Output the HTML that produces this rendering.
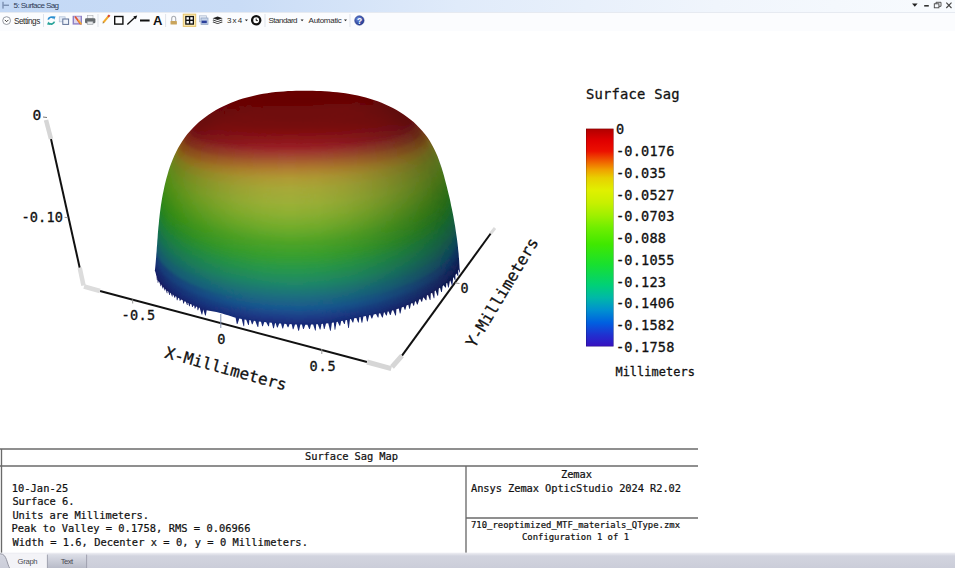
<!DOCTYPE html>
<html><head><meta charset="utf-8"><title>5: Surface Sag</title>
<style>
html,body{margin:0;padding:0;background:#fff;}
body{width:955px;height:568px;position:relative;overflow:hidden;font-family:"Liberation Sans",sans-serif;}
.abs{position:absolute;}
#title{left:0;top:0;width:955px;height:11.5px;background:linear-gradient(90deg,#c3d8f5 0%,#c9dcf6 25%,#e0ebfa 48%,#f0f5fc 75%,#f8fbfe 100%);}
#title span{position:absolute;left:12px;top:0;font-size:8px;line-height:11px;color:#333;}
#tb{left:0;top:11.5px;width:955px;height:19px;background:#fbfcfe;border-top:1px solid #e6eaf1;box-sizing:border-box;}
.t{position:absolute;font-size:7.6px;line-height:10px;color:#222;white-space:nowrap;}
.mono{font-family:"DejaVu Sans Mono","Liberation Mono",monospace;color:#111;white-space:pre;}
#tabs{left:0;top:553px;width:955px;height:15px;background:#cdd0dc;}
</style></head><body>
<div id="title" class="abs"></div>
<div id="tb" class="abs"></div>
<svg class="abs" style="left:0;top:0" width="955" height="568" viewBox="0 0 955 568">
<defs>
<clipPath id="dc"><path d="M154.8,271.0 L155.2,267.7 L155.5,264.4 L155.8,261.1 L156.1,257.8 L156.3,254.5 L156.6,251.2 L156.8,247.8 L157.1,244.5 L157.3,241.1 L157.6,237.7 L157.8,234.2 L158.1,230.7 L158.4,227.2 L158.8,223.7 L159.1,220.1 L159.5,216.5 L159.9,212.9 L160.4,209.2 L160.9,205.5 L161.5,201.8 L162.1,198.0 L162.8,194.2 L163.6,190.4 L164.4,186.6 L165.3,182.7 L166.3,178.8 L167.4,174.9 L168.5,171.0 L169.8,167.1 L171.2,163.2 L172.7,159.4 L174.4,155.5 L176.2,151.8 L178.1,148.1 L180.2,144.4 L182.4,140.9 L184.8,137.4 L187.4,134.1 L190.1,130.9 L192.9,127.9 L195.9,124.9 L199.0,122.1 L202.2,119.4 L205.5,116.9 L208.9,114.5 L212.4,112.2 L216.0,110.1 L219.7,108.0 L223.4,106.2 L227.2,104.4 L231.1,102.8 L235.0,101.2 L238.9,99.8 L242.9,98.6 L246.9,97.4 L251.0,96.4 L255.0,95.4 L259.1,94.6 L263.2,93.8 L267.3,93.2 L271.4,92.6 L275.5,92.1 L279.7,91.7 L283.8,91.4 L287.9,91.1 L292.0,91.0 L296.1,90.8 L300.2,90.8 L304.3,90.7 L308.5,90.8 L312.6,90.8 L316.7,90.9 L320.8,91.1 L324.9,91.3 L329.0,91.6 L333.1,91.9 L337.2,92.3 L341.3,92.8 L345.4,93.3 L349.5,94.0 L353.6,94.7 L357.7,95.5 L361.7,96.5 L365.8,97.5 L369.8,98.7 L373.8,99.9 L377.7,101.3 L381.6,102.8 L385.4,104.4 L389.2,106.2 L392.9,108.0 L396.6,110.0 L400.2,112.2 L403.7,114.5 L407.1,116.9 L410.4,119.4 L413.6,122.1 L416.6,125.0 L419.5,127.9 L422.3,131.0 L425.0,134.2 L427.5,137.6 L429.8,141.1 L431.9,144.7 L433.9,148.4 L435.7,152.2 L437.4,156.1 L438.9,160.0 L440.3,163.9 L441.6,167.8 L442.8,171.7 L443.9,175.6 L444.9,179.5 L445.9,183.3 L446.9,187.1 L447.8,190.8 L448.7,194.5 L449.6,198.1 L450.4,201.8 L451.1,205.4 L451.9,208.9 L452.6,212.4 L453.3,216.0 L453.9,219.4 L454.5,222.9 L455.1,226.3 L455.6,229.8 L456.1,233.2 L456.6,236.6 L457.1,239.9 L457.5,243.3 L457.9,246.7 L458.2,250.0 L458.6,253.4 L458.8,256.7 L459.1,260.0 L459.3,263.3 L459.5,266.7 L459.6,270.0 L459.5,268.0 L459.5,267.7 L460.2,272.6 L459.5,272.6 L458.7,269.5 L458.2,270.7 L458.4,275.9 L457.7,275.9 L456.5,273.6 L455.4,275.1 L455.5,280.3 L454.8,280.3 L453.7,277.3 L453.1,277.9 L452.5,285.3 L451.8,285.3 L450.3,280.4 L449.9,280.7 L448.8,287.5 L448.1,287.5 L447.1,282.8 L446.3,283.4 L446.0,287.6 L445.3,287.6 L443.6,285.3 L442.7,285.9 L441.9,292.0 L441.2,292.0 L440.0,287.8 L438.8,288.5 L438.1,295.8 L437.4,295.8 L435.6,290.6 L434.7,291.1 L434.4,298.3 L433.7,298.3 L432.1,292.7 L430.8,293.4 L430.5,300.0 L429.8,300.0 L428.0,295.0 L426.9,295.6 L426.5,300.3 L425.8,300.3 L423.6,297.4 L423.2,297.6 L422.1,301.8 L421.4,301.8 L420.2,299.1 L419.2,299.6 L417.7,304.6 L417.0,304.6 L415.8,301.3 L415.0,301.6 L414.0,305.7 L413.3,305.7 L412.4,302.9 L411.0,303.5 L409.9,308.7 L409.2,308.7 L408.3,304.7 L406.5,305.5 L405.4,309.7 L404.7,309.7 L403.6,306.7 L401.7,307.5 L400.5,313.6 L399.8,313.6 L398.8,308.5 L396.4,309.3 L396.0,315.5 L395.3,315.5 L393.2,310.2 L392.0,310.5 L390.7,314.9 L390.0,314.9 L388.6,311.4 L387.7,311.6 L386.8,315.4 L386.1,315.4 L384.4,312.3 L383.9,312.5 L382.8,317.4 L382.1,317.4 L380.2,313.2 L378.9,313.5 L378.5,317.5 L377.8,317.5 L376.0,314.1 L373.7,314.5 L372.2,318.6 L371.5,318.6 L370.2,315.1 L369.2,315.3 L367.7,321.5 L367.0,321.5 L365.9,316.0 L363.4,316.4 L362.3,322.8 L361.6,322.8 L360.4,317.0 L359.4,317.2 L358.8,322.5 L358.1,322.5 L356.4,317.9 L354.2,318.3 L353.3,322.6 L352.6,322.6 L350.9,319.1 L350.0,319.3 L348.9,328.0 L348.2,328.0 L347.0,319.9 L345.5,320.2 L344.8,323.9 L344.1,323.9 L342.6,320.8 L341.2,321.1 L340.2,325.8 L339.5,325.8 L337.6,321.8 L336.6,322.0 L335.3,329.7 L334.6,329.7 L333.8,322.5 L331.9,322.8 L330.8,330.8 L330.1,330.8 L328.2,323.3 L326.0,323.5 L324.6,329.1 L323.9,329.1 L322.9,323.8 L321.5,323.9 L320.5,329.5 L319.8,329.5 L317.8,324.2 L316.2,324.3 L315.8,330.4 L315.1,330.4 L313.1,324.5 L311.0,324.6 L309.9,329.1 L309.2,329.1 L307.4,324.7 L305.3,324.7 L303.8,329.0 L303.1,329.0 L301.9,324.6 L300.4,324.6 L299.0,330.7 L298.3,330.7 L296.7,324.5 L295.0,324.4 L293.5,329.2 L292.8,329.2 L291.7,324.2 L289.7,324.1 L288.4,327.3 L287.7,327.3 L286.3,323.9 L284.4,323.8 L283.1,328.4 L282.4,328.4 L281.0,323.6 L279.2,323.5 L277.7,327.4 L277.0,327.4 L275.7,323.2 L275.1,323.1 L273.9,328.2 L273.2,328.2 L271.8,322.8 L269.5,322.6 L269.0,326.3 L268.3,326.3 L266.2,322.3 L264.3,322.1 L262.9,326.2 L262.2,326.2 L261.0,321.7 L258.9,321.4 L258.3,326.9 L257.6,326.9 L255.3,321.0 L253.9,320.8 L252.6,324.3 L251.9,324.3 L250.6,320.3 L249.4,320.1 L248.9,325.0 L248.2,325.0 L246.2,319.7 L244.5,319.4 L244.2,326.3 L243.5,326.3 L241.7,319.0 L239.3,318.6 L237.5,324.1 L236.8,324.1 L235.6,317.8 L233.9,317.2 L231.0,316.2 L228.0,315.3 L225.1,314.4 L222.2,313.6 L219.3,312.8 L216.4,312.1 L213.5,311.5 L210.7,310.9 L207.8,310.4 L206.7,310.2 L205.8,315.6 L205.1,315.6 L203.1,309.1 L203.3,309.2 L202.3,314.4 L201.6,314.4 L199.7,307.9 L199.1,307.6 L198.2,310.3 L197.5,310.3 L197.2,306.9 L196.2,306.5 L195.3,308.5 L194.6,308.5 L194.3,305.7 L193.4,305.4 L192.7,306.9 L192.0,306.9 L191.6,304.6 L190.1,303.9 L189.8,306.2 L189.1,306.2 L188.3,303.1 L187.6,302.7 L187.7,305.0 L187.0,305.0 L185.8,301.8 L184.5,301.2 L183.9,303.5 L183.2,303.5 L182.7,300.3 L181.1,299.4 L180.3,300.8 L179.6,300.8 L179.3,298.5 L178.1,297.8 L177.5,300.2 L176.8,300.2 L176.4,296.8 L175.2,296.2 L175.2,297.8 L174.5,297.8 L173.5,295.1 L172.6,294.5 L172.7,296.6 L172.0,296.6 L170.9,293.4 L169.8,292.6 L170.1,295.0 L169.4,295.0 L168.2,291.4 L167.3,290.7 L167.5,293.3 L166.8,293.3 L165.8,289.4 L165.2,288.8 L165.3,290.6 L164.6,290.6 L163.8,287.5 L163.2,286.9 L163.3,288.4 L162.6,288.4 L161.8,285.4 L160.7,284.0 L161.3,286.2 L160.6,286.2 L159.5,282.4 L158.5,280.9 L158.3,282.8 L157.6,282.8 L157.6,279.2 L157.1,278.0 L157.6,280.2 L156.9,280.2 L156.5,276.2 L156.1,274.8 L157.0,275.7 L156.3,275.7 L155.6,272.8 L155.0,271.0Z"/></clipPath>
<filter id="bl" x="-5%" y="-5%" width="110%" height="110%"><feGaussianBlur stdDeviation="1.2"/></filter>
<linearGradient id="cb" x1="0" y1="0" x2="0" y2="1"><stop offset="0.000" stop-color="#b00000"/><stop offset="0.055" stop-color="#e00000"/><stop offset="0.103" stop-color="#ec1000"/><stop offset="0.150" stop-color="#f06000"/><stop offset="0.188" stop-color="#f0a000"/><stop offset="0.226" stop-color="#e8d000"/><stop offset="0.283" stop-color="#e0f000"/><stop offset="0.340" stop-color="#c8f000"/><stop offset="0.397" stop-color="#a0f000"/><stop offset="0.454" stop-color="#70ee00"/><stop offset="0.530" stop-color="#40e800"/><stop offset="0.625" stop-color="#18e030"/><stop offset="0.720" stop-color="#00d078"/><stop offset="0.777" stop-color="#00b8a8"/><stop offset="0.834" stop-color="#0090d0"/><stop offset="0.891" stop-color="#0060e0"/><stop offset="0.948" stop-color="#2030d0"/><stop offset="1.000" stop-color="#3810c0"/></linearGradient>
<linearGradient id="dk" x1="0" y1="0" x2="0" y2="1"><stop offset="0" stop-color="#640404" stop-opacity="0.9"/><stop offset="0.25" stop-color="#660505" stop-opacity="0.8"/><stop offset="0.5" stop-color="#6a0606" stop-opacity="0.4"/><stop offset="0.72" stop-color="#6a0606" stop-opacity="0"/></linearGradient>
<linearGradient id="sh0" x1="0" y1="0" x2="1" y2="0"><stop offset="0.000" stop-color="#480000" stop-opacity="0.650"/><stop offset="0.025" stop-color="#480000" stop-opacity="0.550"/><stop offset="0.060" stop-color="#480000" stop-opacity="0.447"/><stop offset="0.110" stop-color="#480000" stop-opacity="0.328"/><stop offset="0.175" stop-color="#480000" stop-opacity="0.207"/><stop offset="0.250" stop-color="#480000" stop-opacity="0.105"/><stop offset="0.350" stop-color="#480000" stop-opacity="0.023"/><stop offset="0.440" stop-color="#480000" stop-opacity="0.000"/><stop offset="0.550" stop-color="#350405" stop-opacity="0.029"/><stop offset="0.650" stop-color="#350405" stop-opacity="0.105"/><stop offset="0.725" stop-color="#350405" stop-opacity="0.194"/><stop offset="0.800" stop-color="#350405" stop-opacity="0.310"/><stop offset="0.870" stop-color="#350405" stop-opacity="0.442"/><stop offset="0.925" stop-color="#350405" stop-opacity="0.563"/><stop offset="0.965" stop-color="#350405" stop-opacity="0.659"/><stop offset="1.000" stop-color="#350405" stop-opacity="0.750"/></linearGradient>
<linearGradient id="sh1" x1="0" y1="0" x2="1" y2="0"><stop offset="0.000" stop-color="#550c00" stop-opacity="0.650"/><stop offset="0.025" stop-color="#550c00" stop-opacity="0.550"/><stop offset="0.060" stop-color="#550c00" stop-opacity="0.447"/><stop offset="0.110" stop-color="#550c00" stop-opacity="0.328"/><stop offset="0.175" stop-color="#550c00" stop-opacity="0.207"/><stop offset="0.250" stop-color="#550c00" stop-opacity="0.105"/><stop offset="0.350" stop-color="#550c00" stop-opacity="0.023"/><stop offset="0.440" stop-color="#550c00" stop-opacity="0.000"/><stop offset="0.550" stop-color="#3c1007" stop-opacity="0.029"/><stop offset="0.650" stop-color="#3c1007" stop-opacity="0.105"/><stop offset="0.725" stop-color="#3c1007" stop-opacity="0.194"/><stop offset="0.800" stop-color="#3c1007" stop-opacity="0.310"/><stop offset="0.870" stop-color="#3c1007" stop-opacity="0.442"/><stop offset="0.925" stop-color="#3c1007" stop-opacity="0.563"/><stop offset="0.965" stop-color="#3c1007" stop-opacity="0.659"/><stop offset="1.000" stop-color="#3c1007" stop-opacity="0.750"/></linearGradient>
<linearGradient id="sh2" x1="0" y1="0" x2="1" y2="0"><stop offset="0.000" stop-color="#5f2800" stop-opacity="0.650"/><stop offset="0.025" stop-color="#5f2800" stop-opacity="0.550"/><stop offset="0.060" stop-color="#5f2800" stop-opacity="0.447"/><stop offset="0.110" stop-color="#5f2800" stop-opacity="0.328"/><stop offset="0.175" stop-color="#5f2800" stop-opacity="0.207"/><stop offset="0.250" stop-color="#5f2800" stop-opacity="0.105"/><stop offset="0.350" stop-color="#5f2800" stop-opacity="0.023"/><stop offset="0.440" stop-color="#5f2800" stop-opacity="0.000"/><stop offset="0.550" stop-color="#412107" stop-opacity="0.029"/><stop offset="0.650" stop-color="#412107" stop-opacity="0.105"/><stop offset="0.725" stop-color="#412107" stop-opacity="0.194"/><stop offset="0.800" stop-color="#412107" stop-opacity="0.310"/><stop offset="0.870" stop-color="#412107" stop-opacity="0.442"/><stop offset="0.925" stop-color="#412107" stop-opacity="0.563"/><stop offset="0.965" stop-color="#412107" stop-opacity="0.659"/><stop offset="1.000" stop-color="#412107" stop-opacity="0.750"/></linearGradient>
<linearGradient id="sh3" x1="0" y1="0" x2="1" y2="0"><stop offset="0.000" stop-color="#5c3c00" stop-opacity="0.650"/><stop offset="0.025" stop-color="#5c3c00" stop-opacity="0.550"/><stop offset="0.060" stop-color="#5c3c00" stop-opacity="0.447"/><stop offset="0.110" stop-color="#5c3c00" stop-opacity="0.328"/><stop offset="0.175" stop-color="#5c3c00" stop-opacity="0.207"/><stop offset="0.250" stop-color="#5c3c00" stop-opacity="0.105"/><stop offset="0.350" stop-color="#5c3c00" stop-opacity="0.023"/><stop offset="0.440" stop-color="#5c3c00" stop-opacity="0.000"/><stop offset="0.550" stop-color="#402f08" stop-opacity="0.029"/><stop offset="0.650" stop-color="#402f08" stop-opacity="0.105"/><stop offset="0.725" stop-color="#402f08" stop-opacity="0.194"/><stop offset="0.800" stop-color="#402f08" stop-opacity="0.310"/><stop offset="0.870" stop-color="#402f08" stop-opacity="0.442"/><stop offset="0.925" stop-color="#402f08" stop-opacity="0.563"/><stop offset="0.965" stop-color="#402f08" stop-opacity="0.659"/><stop offset="1.000" stop-color="#402f08" stop-opacity="0.750"/></linearGradient>
<linearGradient id="sh4" x1="0" y1="0" x2="1" y2="0"><stop offset="0.000" stop-color="#474f00" stop-opacity="0.650"/><stop offset="0.025" stop-color="#474f00" stop-opacity="0.550"/><stop offset="0.060" stop-color="#474f00" stop-opacity="0.447"/><stop offset="0.110" stop-color="#474f00" stop-opacity="0.328"/><stop offset="0.175" stop-color="#474f00" stop-opacity="0.207"/><stop offset="0.250" stop-color="#474f00" stop-opacity="0.105"/><stop offset="0.350" stop-color="#474f00" stop-opacity="0.023"/><stop offset="0.440" stop-color="#474f00" stop-opacity="0.000"/><stop offset="0.550" stop-color="#373908" stop-opacity="0.029"/><stop offset="0.650" stop-color="#373908" stop-opacity="0.105"/><stop offset="0.725" stop-color="#373908" stop-opacity="0.194"/><stop offset="0.800" stop-color="#373908" stop-opacity="0.310"/><stop offset="0.870" stop-color="#373908" stop-opacity="0.442"/><stop offset="0.925" stop-color="#373908" stop-opacity="0.563"/><stop offset="0.965" stop-color="#373908" stop-opacity="0.659"/><stop offset="1.000" stop-color="#373908" stop-opacity="0.750"/></linearGradient>
<linearGradient id="sh5" x1="0" y1="0" x2="1" y2="0"><stop offset="0.000" stop-color="#365d00" stop-opacity="0.650"/><stop offset="0.025" stop-color="#365d00" stop-opacity="0.550"/><stop offset="0.060" stop-color="#365d00" stop-opacity="0.447"/><stop offset="0.110" stop-color="#365d00" stop-opacity="0.328"/><stop offset="0.175" stop-color="#365d00" stop-opacity="0.207"/><stop offset="0.250" stop-color="#365d00" stop-opacity="0.105"/><stop offset="0.350" stop-color="#365d00" stop-opacity="0.023"/><stop offset="0.440" stop-color="#365d00" stop-opacity="0.000"/><stop offset="0.550" stop-color="#2f4008" stop-opacity="0.029"/><stop offset="0.650" stop-color="#2f4008" stop-opacity="0.105"/><stop offset="0.725" stop-color="#2f4008" stop-opacity="0.194"/><stop offset="0.800" stop-color="#2f4008" stop-opacity="0.310"/><stop offset="0.870" stop-color="#2f4008" stop-opacity="0.442"/><stop offset="0.925" stop-color="#2f4008" stop-opacity="0.563"/><stop offset="0.965" stop-color="#2f4008" stop-opacity="0.659"/><stop offset="1.000" stop-color="#2f4008" stop-opacity="0.750"/></linearGradient>
<linearGradient id="sh6" x1="0" y1="0" x2="1" y2="0"><stop offset="0.000" stop-color="#2a6500" stop-opacity="0.650"/><stop offset="0.025" stop-color="#2a6500" stop-opacity="0.550"/><stop offset="0.060" stop-color="#2a6500" stop-opacity="0.447"/><stop offset="0.110" stop-color="#2a6500" stop-opacity="0.328"/><stop offset="0.175" stop-color="#2a6500" stop-opacity="0.207"/><stop offset="0.250" stop-color="#2a6500" stop-opacity="0.105"/><stop offset="0.350" stop-color="#2a6500" stop-opacity="0.023"/><stop offset="0.440" stop-color="#2a6500" stop-opacity="0.000"/><stop offset="0.550" stop-color="#294408" stop-opacity="0.029"/><stop offset="0.650" stop-color="#294408" stop-opacity="0.105"/><stop offset="0.725" stop-color="#294408" stop-opacity="0.194"/><stop offset="0.800" stop-color="#294408" stop-opacity="0.310"/><stop offset="0.870" stop-color="#294408" stop-opacity="0.442"/><stop offset="0.925" stop-color="#294408" stop-opacity="0.563"/><stop offset="0.965" stop-color="#294408" stop-opacity="0.659"/><stop offset="1.000" stop-color="#294408" stop-opacity="0.750"/></linearGradient>
<linearGradient id="sh7" x1="0" y1="0" x2="1" y2="0"><stop offset="0.000" stop-color="#226b00" stop-opacity="0.650"/><stop offset="0.025" stop-color="#226b00" stop-opacity="0.550"/><stop offset="0.060" stop-color="#226b00" stop-opacity="0.447"/><stop offset="0.110" stop-color="#226b00" stop-opacity="0.328"/><stop offset="0.175" stop-color="#226b00" stop-opacity="0.207"/><stop offset="0.250" stop-color="#226b00" stop-opacity="0.105"/><stop offset="0.350" stop-color="#226b00" stop-opacity="0.023"/><stop offset="0.440" stop-color="#226b00" stop-opacity="0.000"/><stop offset="0.550" stop-color="#244608" stop-opacity="0.029"/><stop offset="0.650" stop-color="#244608" stop-opacity="0.105"/><stop offset="0.725" stop-color="#244608" stop-opacity="0.194"/><stop offset="0.800" stop-color="#244608" stop-opacity="0.310"/><stop offset="0.870" stop-color="#244608" stop-opacity="0.442"/><stop offset="0.925" stop-color="#244608" stop-opacity="0.563"/><stop offset="0.965" stop-color="#244608" stop-opacity="0.659"/><stop offset="1.000" stop-color="#244608" stop-opacity="0.750"/></linearGradient>
<linearGradient id="sh8" x1="0" y1="0" x2="1" y2="0"><stop offset="0.000" stop-color="#1f6d00" stop-opacity="0.650"/><stop offset="0.025" stop-color="#1f6d00" stop-opacity="0.550"/><stop offset="0.060" stop-color="#1f6d00" stop-opacity="0.447"/><stop offset="0.110" stop-color="#1f6d00" stop-opacity="0.328"/><stop offset="0.175" stop-color="#1f6d00" stop-opacity="0.207"/><stop offset="0.250" stop-color="#1f6d00" stop-opacity="0.105"/><stop offset="0.350" stop-color="#1f6d00" stop-opacity="0.023"/><stop offset="0.440" stop-color="#1f6d00" stop-opacity="0.000"/><stop offset="0.550" stop-color="#204707" stop-opacity="0.029"/><stop offset="0.650" stop-color="#204707" stop-opacity="0.105"/><stop offset="0.725" stop-color="#204707" stop-opacity="0.194"/><stop offset="0.800" stop-color="#204707" stop-opacity="0.310"/><stop offset="0.870" stop-color="#204707" stop-opacity="0.442"/><stop offset="0.925" stop-color="#204707" stop-opacity="0.563"/><stop offset="0.965" stop-color="#204707" stop-opacity="0.659"/><stop offset="1.000" stop-color="#204707" stop-opacity="0.750"/></linearGradient>
<linearGradient id="sh9" x1="0" y1="0" x2="1" y2="0"><stop offset="0.000" stop-color="#1e6e00" stop-opacity="0.650"/><stop offset="0.025" stop-color="#1e6e00" stop-opacity="0.550"/><stop offset="0.060" stop-color="#1e6e00" stop-opacity="0.447"/><stop offset="0.110" stop-color="#1e6e00" stop-opacity="0.328"/><stop offset="0.175" stop-color="#1e6e00" stop-opacity="0.207"/><stop offset="0.250" stop-color="#1e6e00" stop-opacity="0.105"/><stop offset="0.350" stop-color="#1e6e00" stop-opacity="0.023"/><stop offset="0.440" stop-color="#1e6e00" stop-opacity="0.000"/><stop offset="0.550" stop-color="#1c4706" stop-opacity="0.029"/><stop offset="0.650" stop-color="#1c4706" stop-opacity="0.105"/><stop offset="0.725" stop-color="#1c4706" stop-opacity="0.194"/><stop offset="0.800" stop-color="#1c4706" stop-opacity="0.310"/><stop offset="0.870" stop-color="#1c4706" stop-opacity="0.442"/><stop offset="0.925" stop-color="#1c4706" stop-opacity="0.563"/><stop offset="0.965" stop-color="#1c4706" stop-opacity="0.659"/><stop offset="1.000" stop-color="#1c4706" stop-opacity="0.750"/></linearGradient>
<linearGradient id="sh10" x1="0" y1="0" x2="1" y2="0"><stop offset="0.000" stop-color="#1c7000" stop-opacity="0.650"/><stop offset="0.025" stop-color="#1c7000" stop-opacity="0.550"/><stop offset="0.060" stop-color="#1c7000" stop-opacity="0.447"/><stop offset="0.110" stop-color="#1c7000" stop-opacity="0.328"/><stop offset="0.175" stop-color="#1c7000" stop-opacity="0.207"/><stop offset="0.250" stop-color="#1c7000" stop-opacity="0.105"/><stop offset="0.350" stop-color="#1c7000" stop-opacity="0.023"/><stop offset="0.440" stop-color="#1c7000" stop-opacity="0.000"/><stop offset="0.550" stop-color="#184706" stop-opacity="0.029"/><stop offset="0.650" stop-color="#184706" stop-opacity="0.105"/><stop offset="0.725" stop-color="#184706" stop-opacity="0.194"/><stop offset="0.800" stop-color="#184706" stop-opacity="0.310"/><stop offset="0.870" stop-color="#184706" stop-opacity="0.442"/><stop offset="0.925" stop-color="#184706" stop-opacity="0.563"/><stop offset="0.965" stop-color="#184706" stop-opacity="0.659"/><stop offset="1.000" stop-color="#184706" stop-opacity="0.750"/></linearGradient>
<linearGradient id="sh11" x1="0" y1="0" x2="1" y2="0"><stop offset="0.000" stop-color="#186b0f" stop-opacity="0.650"/><stop offset="0.025" stop-color="#186b0f" stop-opacity="0.550"/><stop offset="0.060" stop-color="#186b0f" stop-opacity="0.447"/><stop offset="0.110" stop-color="#186b0f" stop-opacity="0.328"/><stop offset="0.175" stop-color="#186b0f" stop-opacity="0.207"/><stop offset="0.250" stop-color="#186b0f" stop-opacity="0.105"/><stop offset="0.350" stop-color="#186b0f" stop-opacity="0.023"/><stop offset="0.440" stop-color="#186b0f" stop-opacity="0.000"/><stop offset="0.550" stop-color="#14440d" stop-opacity="0.029"/><stop offset="0.650" stop-color="#14440d" stop-opacity="0.105"/><stop offset="0.725" stop-color="#14440d" stop-opacity="0.194"/><stop offset="0.800" stop-color="#14440d" stop-opacity="0.310"/><stop offset="0.870" stop-color="#14440d" stop-opacity="0.442"/><stop offset="0.925" stop-color="#14440d" stop-opacity="0.563"/><stop offset="0.965" stop-color="#14440d" stop-opacity="0.659"/><stop offset="1.000" stop-color="#14440d" stop-opacity="0.750"/></linearGradient>
<linearGradient id="sh12" x1="0" y1="0" x2="1" y2="0"><stop offset="0.000" stop-color="#146520" stop-opacity="0.650"/><stop offset="0.025" stop-color="#146520" stop-opacity="0.550"/><stop offset="0.060" stop-color="#146520" stop-opacity="0.447"/><stop offset="0.110" stop-color="#146520" stop-opacity="0.328"/><stop offset="0.175" stop-color="#146520" stop-opacity="0.207"/><stop offset="0.250" stop-color="#146520" stop-opacity="0.105"/><stop offset="0.350" stop-color="#146520" stop-opacity="0.023"/><stop offset="0.440" stop-color="#146520" stop-opacity="0.000"/><stop offset="0.550" stop-color="#104115" stop-opacity="0.029"/><stop offset="0.650" stop-color="#104115" stop-opacity="0.105"/><stop offset="0.725" stop-color="#104115" stop-opacity="0.194"/><stop offset="0.800" stop-color="#104115" stop-opacity="0.310"/><stop offset="0.870" stop-color="#104115" stop-opacity="0.442"/><stop offset="0.925" stop-color="#104115" stop-opacity="0.563"/><stop offset="0.965" stop-color="#104115" stop-opacity="0.659"/><stop offset="1.000" stop-color="#104115" stop-opacity="0.750"/></linearGradient>
<linearGradient id="sh13" x1="0" y1="0" x2="1" y2="0"><stop offset="0.000" stop-color="#106030" stop-opacity="0.650"/><stop offset="0.025" stop-color="#106030" stop-opacity="0.550"/><stop offset="0.060" stop-color="#106030" stop-opacity="0.447"/><stop offset="0.110" stop-color="#106030" stop-opacity="0.328"/><stop offset="0.175" stop-color="#106030" stop-opacity="0.207"/><stop offset="0.250" stop-color="#106030" stop-opacity="0.105"/><stop offset="0.350" stop-color="#106030" stop-opacity="0.023"/><stop offset="0.440" stop-color="#106030" stop-opacity="0.000"/><stop offset="0.550" stop-color="#0c3e1f" stop-opacity="0.029"/><stop offset="0.650" stop-color="#0c3e1f" stop-opacity="0.105"/><stop offset="0.725" stop-color="#0c3e1f" stop-opacity="0.194"/><stop offset="0.800" stop-color="#0c3e1f" stop-opacity="0.310"/><stop offset="0.870" stop-color="#0c3e1f" stop-opacity="0.442"/><stop offset="0.925" stop-color="#0c3e1f" stop-opacity="0.563"/><stop offset="0.965" stop-color="#0c3e1f" stop-opacity="0.659"/><stop offset="1.000" stop-color="#0c3e1f" stop-opacity="0.750"/></linearGradient>
<linearGradient id="sh14" x1="0" y1="0" x2="1" y2="0"><stop offset="0.000" stop-color="#10593e" stop-opacity="0.650"/><stop offset="0.025" stop-color="#10593e" stop-opacity="0.550"/><stop offset="0.060" stop-color="#10593e" stop-opacity="0.447"/><stop offset="0.110" stop-color="#10593e" stop-opacity="0.328"/><stop offset="0.175" stop-color="#10593e" stop-opacity="0.207"/><stop offset="0.250" stop-color="#10593e" stop-opacity="0.105"/><stop offset="0.350" stop-color="#10593e" stop-opacity="0.023"/><stop offset="0.440" stop-color="#10593e" stop-opacity="0.000"/><stop offset="0.550" stop-color="#0c3a28" stop-opacity="0.029"/><stop offset="0.650" stop-color="#0c3a28" stop-opacity="0.105"/><stop offset="0.725" stop-color="#0c3a28" stop-opacity="0.194"/><stop offset="0.800" stop-color="#0c3a28" stop-opacity="0.310"/><stop offset="0.870" stop-color="#0c3a28" stop-opacity="0.442"/><stop offset="0.925" stop-color="#0c3a28" stop-opacity="0.563"/><stop offset="0.965" stop-color="#0c3a28" stop-opacity="0.659"/><stop offset="1.000" stop-color="#0c3a28" stop-opacity="0.750"/></linearGradient>
<linearGradient id="sh15" x1="0" y1="0" x2="1" y2="0"><stop offset="0.000" stop-color="#10524c" stop-opacity="0.650"/><stop offset="0.025" stop-color="#10524c" stop-opacity="0.550"/><stop offset="0.060" stop-color="#10524c" stop-opacity="0.447"/><stop offset="0.110" stop-color="#10524c" stop-opacity="0.328"/><stop offset="0.175" stop-color="#10524c" stop-opacity="0.207"/><stop offset="0.250" stop-color="#10524c" stop-opacity="0.105"/><stop offset="0.350" stop-color="#10524c" stop-opacity="0.023"/><stop offset="0.440" stop-color="#10524c" stop-opacity="0.000"/><stop offset="0.550" stop-color="#0b3530" stop-opacity="0.029"/><stop offset="0.650" stop-color="#0b3530" stop-opacity="0.105"/><stop offset="0.725" stop-color="#0b3530" stop-opacity="0.194"/><stop offset="0.800" stop-color="#0b3530" stop-opacity="0.310"/><stop offset="0.870" stop-color="#0b3530" stop-opacity="0.442"/><stop offset="0.925" stop-color="#0b3530" stop-opacity="0.563"/><stop offset="0.965" stop-color="#0b3530" stop-opacity="0.659"/><stop offset="1.000" stop-color="#0b3530" stop-opacity="0.750"/></linearGradient>
<linearGradient id="sh16" x1="0" y1="0" x2="1" y2="0"><stop offset="0.000" stop-color="#104959" stop-opacity="0.650"/><stop offset="0.025" stop-color="#104959" stop-opacity="0.550"/><stop offset="0.060" stop-color="#104959" stop-opacity="0.447"/><stop offset="0.110" stop-color="#104959" stop-opacity="0.328"/><stop offset="0.175" stop-color="#104959" stop-opacity="0.207"/><stop offset="0.250" stop-color="#104959" stop-opacity="0.105"/><stop offset="0.350" stop-color="#104959" stop-opacity="0.023"/><stop offset="0.440" stop-color="#104959" stop-opacity="0.000"/><stop offset="0.550" stop-color="#0a2e38" stop-opacity="0.029"/><stop offset="0.650" stop-color="#0a2e38" stop-opacity="0.105"/><stop offset="0.725" stop-color="#0a2e38" stop-opacity="0.194"/><stop offset="0.800" stop-color="#0a2e38" stop-opacity="0.310"/><stop offset="0.870" stop-color="#0a2e38" stop-opacity="0.442"/><stop offset="0.925" stop-color="#0a2e38" stop-opacity="0.563"/><stop offset="0.965" stop-color="#0a2e38" stop-opacity="0.659"/><stop offset="1.000" stop-color="#0a2e38" stop-opacity="0.750"/></linearGradient>
<linearGradient id="sh17" x1="0" y1="0" x2="1" y2="0"><stop offset="0.000" stop-color="#161f5f" stop-opacity="0.650"/><stop offset="0.025" stop-color="#161f5f" stop-opacity="0.550"/><stop offset="0.060" stop-color="#161f5f" stop-opacity="0.447"/><stop offset="0.110" stop-color="#161f5f" stop-opacity="0.328"/><stop offset="0.175" stop-color="#161f5f" stop-opacity="0.207"/><stop offset="0.250" stop-color="#161f5f" stop-opacity="0.105"/><stop offset="0.350" stop-color="#161f5f" stop-opacity="0.023"/><stop offset="0.440" stop-color="#161f5f" stop-opacity="0.000"/><stop offset="0.550" stop-color="#0c1a3c" stop-opacity="0.029"/><stop offset="0.650" stop-color="#0c1a3c" stop-opacity="0.105"/><stop offset="0.725" stop-color="#0c1a3c" stop-opacity="0.194"/><stop offset="0.800" stop-color="#0c1a3c" stop-opacity="0.310"/><stop offset="0.870" stop-color="#0c1a3c" stop-opacity="0.442"/><stop offset="0.925" stop-color="#0c1a3c" stop-opacity="0.563"/><stop offset="0.965" stop-color="#0c1a3c" stop-opacity="0.659"/><stop offset="1.000" stop-color="#0c1a3c" stop-opacity="0.750"/></linearGradient>
<linearGradient id="sh18" x1="0" y1="0" x2="1" y2="0"><stop offset="0.000" stop-color="#131655" stop-opacity="0.650"/><stop offset="0.025" stop-color="#131655" stop-opacity="0.550"/><stop offset="0.060" stop-color="#131655" stop-opacity="0.447"/><stop offset="0.110" stop-color="#131655" stop-opacity="0.328"/><stop offset="0.175" stop-color="#131655" stop-opacity="0.207"/><stop offset="0.250" stop-color="#131655" stop-opacity="0.105"/><stop offset="0.350" stop-color="#131655" stop-opacity="0.023"/><stop offset="0.440" stop-color="#131655" stop-opacity="0.000"/><stop offset="0.550" stop-color="#0c1237" stop-opacity="0.029"/><stop offset="0.650" stop-color="#0c1237" stop-opacity="0.105"/><stop offset="0.725" stop-color="#0c1237" stop-opacity="0.194"/><stop offset="0.800" stop-color="#0c1237" stop-opacity="0.310"/><stop offset="0.870" stop-color="#0c1237" stop-opacity="0.442"/><stop offset="0.925" stop-color="#0c1237" stop-opacity="0.563"/><stop offset="0.965" stop-color="#0c1237" stop-opacity="0.659"/><stop offset="1.000" stop-color="#0c1237" stop-opacity="0.750"/></linearGradient>
<linearGradient id="sh19" x1="0" y1="0" x2="1" y2="0"><stop offset="0.000" stop-color="#10104a" stop-opacity="0.650"/><stop offset="0.025" stop-color="#10104a" stop-opacity="0.550"/><stop offset="0.060" stop-color="#10104a" stop-opacity="0.447"/><stop offset="0.110" stop-color="#10104a" stop-opacity="0.328"/><stop offset="0.175" stop-color="#10104a" stop-opacity="0.207"/><stop offset="0.250" stop-color="#10104a" stop-opacity="0.105"/><stop offset="0.350" stop-color="#10104a" stop-opacity="0.023"/><stop offset="0.440" stop-color="#10104a" stop-opacity="0.000"/><stop offset="0.550" stop-color="#0a0d30" stop-opacity="0.029"/><stop offset="0.650" stop-color="#0a0d30" stop-opacity="0.105"/><stop offset="0.725" stop-color="#0a0d30" stop-opacity="0.194"/><stop offset="0.800" stop-color="#0a0d30" stop-opacity="0.310"/><stop offset="0.870" stop-color="#0a0d30" stop-opacity="0.442"/><stop offset="0.925" stop-color="#0a0d30" stop-opacity="0.563"/><stop offset="0.965" stop-color="#0a0d30" stop-opacity="0.659"/><stop offset="1.000" stop-color="#0a0d30" stop-opacity="0.750"/></linearGradient>

<radialGradient id="hp" cx="0.4" cy="0.35" r="0.7"><stop offset="0" stop-color="#6f8fe0"/><stop offset="1" stop-color="#1d2f86"/></radialGradient>
<linearGradient id="tbg" x1="0" y1="0" x2="0" y2="1"><stop offset="0" stop-color="#f0f0f5"/><stop offset="0.22" stop-color="#d2d4df"/><stop offset="1" stop-color="#cbcdd9"/></linearGradient>
<linearGradient id="ttab" x1="0" y1="0" x2="0" y2="1"><stop offset="0" stop-color="#dcdee7"/><stop offset="1" stop-color="#b8bbc8"/></linearGradient>
</defs>
<!-- title bar + toolbar -->
<g font-family="'Liberation Sans',sans-serif">
<g stroke="#5f7396" stroke-width="1" fill="none"><path d="M3,1.8 V8.6"/><path d="M3.5,5.2 H9"/></g>
<text x="13.6" y="7.9" font-size="8.1" fill="#2f3b55" textLength="45.5">5: Surface Sag</text>
<!-- window buttons -->
<path d="M912,3.6 h5.6 l-2.8,3.2z" fill="#222"/>
<rect x="924.2" y="5" width="4.6" height="1.6" fill="#333"/>
<g fill="none" stroke="#444" stroke-width="0.9"><rect x="934.3" y="3.8" width="4.6" height="4"/><path d="M936,3.8 V2.3 H941 V6.3 H939"/></g>
<g stroke="#444" stroke-width="1.1"><path d="M946.3,2.6 L951.5,8"/><path d="M951.5,2.6 L946.3,8"/></g>
<!-- settings -->
<circle cx="6.6" cy="20.6" r="3.9" fill="#fff" stroke="#8a8f99" stroke-width="0.9"/>
<path d="M4.8,19.9 L6.6,21.7 L8.4,19.9" fill="none" stroke="#333" stroke-width="1"/>
<text x="14" y="23.6" font-size="8.2" fill="#2a2a2a" textLength="26.3">Settings</text>
<path d="M43.5,14 V27" stroke="#dfe3ea" stroke-width="1"/>
<!-- refresh -->
<g fill="none" stroke-width="1.7"><path d="M48.2,19.6 A3.3,3.3 0 0 1 53.6,18" stroke="#2b8fd0"/><path d="M54.4,21.6 A3.3,3.3 0 0 1 49,23.2" stroke="#27a39a"/></g>
<path d="M52.3,16.2 L55.6,16.6 L54.2,19.8z" fill="#2b8fd0"/><path d="M50.3,25 L47,24.6 L48.4,21.4z" fill="#27a39a"/>
<!-- copy -->
<rect x="59.3" y="16.8" width="5.8" height="5" fill="#e3ebf6" stroke="#b4c3da" stroke-width="0.8"/>
<rect x="62.8" y="19" width="5.8" height="5.4" fill="#eef3fa" stroke="#5f7196" stroke-width="1"/>
<!-- save chart -->
<rect x="72.6" y="15.8" width="9.4" height="8.8" fill="#8f82c6"/>
<rect x="74" y="16.6" width="6.6" height="6.6" fill="#ddd6ee"/>
<path d="M75,16.5 L80.8,24.3" stroke="#e2542f" stroke-width="1.7"/>
<path d="M78.4,20 L81.6,24.4" stroke="#f1b13a" stroke-width="1.3"/>
<!-- printer -->
<rect x="87.4" y="15.6" width="5.6" height="3.2" fill="#f4f5f6" stroke="#9a9ea4" stroke-width="0.5"/>
<rect x="85" y="18.3" width="10.4" height="5" rx="1.2" fill="#666b6e"/>
<rect x="87.2" y="21.4" width="5.8" height="3.2" fill="#e3e5e8" stroke="#8a8f96" stroke-width="0.5"/>
<path d="M98,14 V27" stroke="#dfe3ea" stroke-width="1"/>
<!-- pencil -->
<path d="M103.2,22.6 L108.4,16.4" stroke="#f0a92c" stroke-width="2.1"/>
<path d="M108.1,16.8 L109.6,15.1" stroke="#d8402c" stroke-width="2.1"/>
<path d="M102.6,23.4 L103.9,22.9 L103,22.1z" fill="#444"/>
<!-- square -->
<rect x="114.7" y="16.5" width="8.2" height="7.6" fill="#fff" stroke="#111" stroke-width="1.4"/>
<!-- arrow -->
<path d="M127.3,24.4 L135.6,16.8" stroke="#111" stroke-width="1.3"/>
<path d="M137.2,15.5 L133.3,16.5 L135.9,19.2z" fill="#111"/>
<!-- dash -->
<rect x="140" y="19.5" width="9.6" height="2" fill="#111"/>
<!-- A -->
<text x="153" y="24.6" font-size="12.2" font-weight="bold" fill="#111" textLength="9.4" lengthAdjust="spacingAndGlyphs">A</text>
<path d="M165.6,14 V27" stroke="#dfe3ea" stroke-width="1"/>
<!-- lock -->
<path d="M171.7,21 V18.6 A2,2.4 0 0 1 175.7,18.6 V21" fill="none" stroke="#a9adb3" stroke-width="1.1"/>
<rect x="170.5" y="21" width="6.4" height="3.6" rx="0.6" fill="#c9a45c"/>
<!-- highlighted 4-pane -->
<rect x="183.3" y="14.2" width="12.4" height="12.2" fill="#fbe9b0" stroke="#e5c46c" stroke-width="1"/>
<rect x="185.2" y="15.9" width="8.8" height="8.8" fill="#111"/>
<g fill="#fff"><rect x="186.5" y="17.2" width="2.4" height="2.4"/><rect x="190.3" y="17.2" width="2.4" height="2.4"/><rect x="186.5" y="21" width="2.4" height="2.4"/><rect x="190.3" y="21" width="2.4" height="2.4"/></g>
<!-- window -->
<rect x="199.4" y="15.8" width="7" height="6" fill="#e4ebf5" stroke="#a9b7cc" stroke-width="0.7"/>
<rect x="201" y="18" width="7" height="6.4" fill="#c8d6ec" stroke="#8a9dbd" stroke-width="0.7"/>
<rect x="201.6" y="20.6" width="5.2" height="2.6" fill="#2b3f9a"/>
<!-- layers -->
<g fill="#222"><path d="M217.6,16.4 L222.6,18.2 L217.6,20 L212.6,18.2z"/><path d="M213.2,19.6 L217.6,21.2 L222,19.6 L222.6,20.2 L217.6,22 L212.6,20.2z"/><path d="M213.2,21.6 L217.6,23.2 L222,21.6 L222.6,22.2 L217.6,24 L212.6,22.2z"/></g>
<text x="227" y="23.4" font-size="8" fill="#2a2a2a" textLength="15.2">3 x 4</text>
<path d="M244.9,19.4 h3 l-1.5,1.9z" fill="#222"/>
<!-- reset circle -->
<circle cx="256.2" cy="20.3" r="4.1" fill="#fff" stroke="#111" stroke-width="2.3"/>
<path d="M256.2,18.6 V20.6 H257.8" fill="none" stroke="#111" stroke-width="1"/>
<path d="M265,14 V27" stroke="#dfe3ea" stroke-width="1"/>
<text x="268.5" y="23.4" font-size="8" fill="#2a2a2a" textLength="29">Standard</text>
<path d="M300.6,19.4 h3 l-1.5,1.9z" fill="#222"/>
<text x="308.6" y="23.4" font-size="8" fill="#2a2a2a" textLength="33.2">Automatic</text>
<path d="M344,19.4 h3 l-1.5,1.9z" fill="#222"/>
<path d="M350,14 V27" stroke="#dfe3ea" stroke-width="1"/>
<!-- help -->
<circle cx="359.4" cy="20.5" r="4.7" fill="url(#hp)" stroke="#2a3f8f" stroke-width="0.6"/>
<text x="357" y="23.6" font-size="8.4" font-weight="bold" fill="#fff">?</text>
</g>

<!-- axes -->
<g fill="none" stroke-linecap="butt">
<path d="M51,139 L79.7,267.7" stroke="#111" stroke-width="2"/>
<path d="M100,291 L367,362" stroke="#111" stroke-width="2"/>
<path d="M402,355.6 L490.7,233.5" stroke="#111" stroke-width="2"/>
<path d="M46,120 L51,139" stroke="#d6d6d6" stroke-width="4.5"/>
<path d="M79.7,267.7 L83.5,285.5" stroke="#dcdcdc" stroke-width="4.5"/>
<path d="M84,286.5 L100,291" stroke="#dcdcdc" stroke-width="4.5"/>
<path d="M367,362 L391.3,368.6" stroke="#d6d6d6" stroke-width="5"/>
<path d="M392,367 L402,355.6" stroke="#d6d6d6" stroke-width="5"/>
<path d="M490.7,233.5 L495,228" stroke="#dcdcdc" stroke-width="3"/>
<path d="M43,117 L47,117.5" stroke="#777" stroke-width="1"/>
<path d="M64.6,217.3 L67.6,217.7" stroke="#999" stroke-width="1"/>
<path d="M132.7,299.5 L132.7,303.5" stroke="#999" stroke-width="1"/>
<path d="M220.8,314 L220.8,328" stroke="#8090b0" stroke-width="1"/>
<path d="M321.8,349 L321.8,354" stroke="#999" stroke-width="1"/>
<path d="M455,283 L459.5,283.5" stroke="#999" stroke-width="1"/>
</g>
<!-- dome -->
<g clip-path="url(#dc)"><g filter="url(#bl)">
<rect x="140" y="80" width="340" height="80" fill="#660505"/><rect x="140" y="160" width="340" height="180" fill="#1a2a78"/>
<g transform="rotate(-1.836 307 230)">
<ellipse cx="306.3" cy="263.4" rx="154.3" ry="64.1" fill="#1a2a78"/>
<ellipse cx="306.3" cy="263.4" rx="154.3" ry="64.1" fill="url(#sh19)" fill-opacity="1.00"/>
<ellipse cx="306.3" cy="262.5" rx="154.2" ry="64.1" fill="#1a2a78"/>
<ellipse cx="306.3" cy="262.5" rx="154.2" ry="64.1" fill="url(#sh19)" fill-opacity="1.00"/>
<ellipse cx="306.3" cy="261.5" rx="154.1" ry="64.1" fill="#1a2a78"/>
<ellipse cx="306.3" cy="261.5" rx="154.1" ry="64.1" fill="url(#sh19)" fill-opacity="1.00"/>
<ellipse cx="306.3" cy="260.5" rx="154.0" ry="64.0" fill="#1a2b79"/>
<ellipse cx="306.3" cy="260.5" rx="154.0" ry="64.0" fill="url(#sh19)" fill-opacity="1.00"/>
<ellipse cx="306.3" cy="259.6" rx="153.9" ry="64.0" fill="#1a2e7b"/>
<ellipse cx="306.3" cy="259.6" rx="153.9" ry="64.0" fill="url(#sh19)" fill-opacity="1.00"/>
<ellipse cx="306.3" cy="258.6" rx="153.8" ry="63.9" fill="#1b307e"/>
<ellipse cx="306.3" cy="258.6" rx="153.8" ry="63.9" fill="url(#sh19)" fill-opacity="1.00"/>
<ellipse cx="306.3" cy="257.7" rx="153.7" ry="63.9" fill="#1b3380"/>
<ellipse cx="306.3" cy="257.7" rx="153.7" ry="63.9" fill="url(#sh18)" fill-opacity="1.00"/>
<ellipse cx="306.3" cy="256.7" rx="153.6" ry="63.8" fill="#1b3682"/>
<ellipse cx="306.3" cy="256.7" rx="153.6" ry="63.8" fill="url(#sh18)" fill-opacity="1.00"/>
<ellipse cx="306.3" cy="255.8" rx="153.5" ry="63.7" fill="#1c3885"/>
<ellipse cx="306.3" cy="255.8" rx="153.5" ry="63.7" fill="url(#sh18)" fill-opacity="1.00"/>
<ellipse cx="306.3" cy="254.9" rx="153.4" ry="63.7" fill="#1c3b87"/>
<ellipse cx="306.3" cy="254.9" rx="153.4" ry="63.7" fill="url(#sh18)" fill-opacity="1.00"/>
<ellipse cx="306.3" cy="253.9" rx="153.3" ry="63.6" fill="#1c3e89"/>
<ellipse cx="306.3" cy="253.9" rx="153.3" ry="63.6" fill="url(#sh18)" fill-opacity="1.00"/>
<ellipse cx="306.2" cy="253.0" rx="153.2" ry="63.6" fill="#1c4189"/>
<ellipse cx="306.2" cy="253.0" rx="153.2" ry="63.6" fill="url(#sh18)" fill-opacity="1.00"/>
<ellipse cx="306.2" cy="252.1" rx="153.1" ry="63.5" fill="#1b448a"/>
<ellipse cx="306.2" cy="252.1" rx="153.1" ry="63.5" fill="url(#sh18)" fill-opacity="1.00"/>
<ellipse cx="306.2" cy="251.1" rx="153.0" ry="63.4" fill="#1b478b"/>
<ellipse cx="306.2" cy="251.1" rx="153.0" ry="63.4" fill="url(#sh18)" fill-opacity="1.00"/>
<ellipse cx="306.2" cy="250.2" rx="152.9" ry="63.3" fill="#1b4a8c"/>
<ellipse cx="306.2" cy="250.2" rx="152.9" ry="63.3" fill="url(#sh18)" fill-opacity="1.00"/>
<ellipse cx="306.2" cy="249.3" rx="152.8" ry="63.3" fill="#1b4d8d"/>
<ellipse cx="306.2" cy="249.3" rx="152.8" ry="63.3" fill="url(#sh18)" fill-opacity="1.00"/>
<ellipse cx="306.2" cy="248.4" rx="152.7" ry="63.2" fill="#1b508e"/>
<ellipse cx="306.2" cy="248.4" rx="152.7" ry="63.2" fill="url(#sh17)" fill-opacity="1.00"/>
<ellipse cx="306.2" cy="247.5" rx="152.6" ry="63.1" fill="#1a538f"/>
<ellipse cx="306.2" cy="247.5" rx="152.6" ry="63.1" fill="url(#sh17)" fill-opacity="1.00"/>
<ellipse cx="306.2" cy="246.5" rx="152.5" ry="63.0" fill="#1a5690"/>
<ellipse cx="306.2" cy="246.5" rx="152.5" ry="63.0" fill="url(#sh17)" fill-opacity="1.00"/>
<ellipse cx="306.2" cy="245.6" rx="152.4" ry="62.9" fill="#1a598f"/>
<ellipse cx="306.2" cy="245.6" rx="152.4" ry="62.9" fill="url(#sh17)" fill-opacity="1.00"/>
<ellipse cx="306.2" cy="244.7" rx="152.3" ry="62.8" fill="#1a5b8e"/>
<ellipse cx="306.2" cy="244.7" rx="152.3" ry="62.8" fill="url(#sh17)" fill-opacity="1.00"/>
<ellipse cx="306.2" cy="243.8" rx="152.2" ry="62.7" fill="#1a5d8d"/>
<ellipse cx="306.2" cy="243.8" rx="152.2" ry="62.7" fill="url(#sh17)" fill-opacity="1.00"/>
<ellipse cx="306.2" cy="242.9" rx="152.1" ry="62.7" fill="#1b5f8b"/>
<ellipse cx="306.2" cy="242.9" rx="152.1" ry="62.7" fill="url(#sh17)" fill-opacity="1.00"/>
<ellipse cx="306.2" cy="242.0" rx="152.0" ry="62.6" fill="#1b618a"/>
<ellipse cx="306.2" cy="242.0" rx="152.0" ry="62.6" fill="url(#sh17)" fill-opacity="1.00"/>
<ellipse cx="306.2" cy="241.1" rx="151.9" ry="62.5" fill="#1b6288"/>
<ellipse cx="306.2" cy="241.1" rx="151.9" ry="62.5" fill="url(#sh17)" fill-opacity="0.99"/>
<ellipse cx="306.2" cy="240.2" rx="151.8" ry="62.4" fill="#1b6487"/>
<ellipse cx="306.2" cy="240.2" rx="151.8" ry="62.4" fill="url(#sh16)" fill-opacity="0.99"/>
<ellipse cx="306.2" cy="239.3" rx="151.7" ry="62.3" fill="#1b6686"/>
<ellipse cx="306.2" cy="239.3" rx="151.7" ry="62.3" fill="url(#sh16)" fill-opacity="0.99"/>
<ellipse cx="306.2" cy="238.4" rx="151.6" ry="62.2" fill="#1b6884"/>
<ellipse cx="306.2" cy="238.4" rx="151.6" ry="62.2" fill="url(#sh16)" fill-opacity="0.99"/>
<ellipse cx="306.2" cy="237.5" rx="151.5" ry="62.0" fill="#1c6a83"/>
<ellipse cx="306.2" cy="237.5" rx="151.5" ry="62.0" fill="url(#sh16)" fill-opacity="0.99"/>
<ellipse cx="306.2" cy="236.6" rx="151.3" ry="61.9" fill="#1c6c81"/>
<ellipse cx="306.2" cy="236.6" rx="151.3" ry="61.9" fill="url(#sh16)" fill-opacity="0.99"/>
<ellipse cx="306.2" cy="235.7" rx="151.2" ry="61.8" fill="#1c6e80"/>
<ellipse cx="306.2" cy="235.7" rx="151.2" ry="61.8" fill="url(#sh16)" fill-opacity="0.99"/>
<ellipse cx="306.2" cy="234.8" rx="151.1" ry="61.7" fill="#1c707e"/>
<ellipse cx="306.2" cy="234.8" rx="151.1" ry="61.7" fill="url(#sh16)" fill-opacity="0.99"/>
<ellipse cx="306.2" cy="234.0" rx="151.0" ry="61.6" fill="#1d727d"/>
<ellipse cx="306.2" cy="234.0" rx="151.0" ry="61.6" fill="url(#sh16)" fill-opacity="0.99"/>
<ellipse cx="306.2" cy="233.1" rx="150.9" ry="61.5" fill="#1d747b"/>
<ellipse cx="306.2" cy="233.1" rx="150.9" ry="61.5" fill="url(#sh16)" fill-opacity="0.99"/>
<ellipse cx="306.2" cy="232.2" rx="150.8" ry="61.4" fill="#1d7679"/>
<ellipse cx="306.2" cy="232.2" rx="150.8" ry="61.4" fill="url(#sh16)" fill-opacity="0.99"/>
<ellipse cx="306.2" cy="231.3" rx="150.6" ry="61.2" fill="#1d7777"/>
<ellipse cx="306.2" cy="231.3" rx="150.6" ry="61.2" fill="url(#sh15)" fill-opacity="0.99"/>
<ellipse cx="306.2" cy="230.4" rx="150.5" ry="61.1" fill="#1e7976"/>
<ellipse cx="306.2" cy="230.4" rx="150.5" ry="61.1" fill="url(#sh15)" fill-opacity="0.99"/>
<ellipse cx="306.1" cy="229.6" rx="150.4" ry="61.0" fill="#1e7b74"/>
<ellipse cx="306.1" cy="229.6" rx="150.4" ry="61.0" fill="url(#sh15)" fill-opacity="0.99"/>
<ellipse cx="306.1" cy="228.7" rx="150.3" ry="60.9" fill="#1e7d72"/>
<ellipse cx="306.1" cy="228.7" rx="150.3" ry="60.9" fill="url(#sh15)" fill-opacity="0.99"/>
<ellipse cx="306.1" cy="227.8" rx="150.1" ry="60.7" fill="#1f7f70"/>
<ellipse cx="306.1" cy="227.8" rx="150.1" ry="60.7" fill="url(#sh15)" fill-opacity="0.99"/>
<ellipse cx="306.1" cy="227.0" rx="150.0" ry="60.6" fill="#1f816e"/>
<ellipse cx="306.1" cy="227.0" rx="150.0" ry="60.6" fill="url(#sh15)" fill-opacity="0.99"/>
<ellipse cx="306.1" cy="226.1" rx="149.9" ry="60.5" fill="#1f836d"/>
<ellipse cx="306.1" cy="226.1" rx="149.9" ry="60.5" fill="url(#sh15)" fill-opacity="0.99"/>
<ellipse cx="306.1" cy="225.2" rx="149.8" ry="60.3" fill="#20856b"/>
<ellipse cx="306.1" cy="225.2" rx="149.8" ry="60.3" fill="url(#sh15)" fill-opacity="0.99"/>
<ellipse cx="306.1" cy="224.4" rx="149.6" ry="60.2" fill="#208769"/>
<ellipse cx="306.1" cy="224.4" rx="149.6" ry="60.2" fill="url(#sh15)" fill-opacity="0.99"/>
<ellipse cx="306.1" cy="223.5" rx="149.5" ry="60.1" fill="#208867"/>
<ellipse cx="306.1" cy="223.5" rx="149.5" ry="60.1" fill="url(#sh14)" fill-opacity="0.99"/>
<ellipse cx="306.1" cy="222.6" rx="149.4" ry="59.9" fill="#218a65"/>
<ellipse cx="306.1" cy="222.6" rx="149.4" ry="59.9" fill="url(#sh14)" fill-opacity="0.99"/>
<ellipse cx="306.1" cy="221.8" rx="149.2" ry="59.8" fill="#218b63"/>
<ellipse cx="306.1" cy="221.8" rx="149.2" ry="59.8" fill="url(#sh14)" fill-opacity="0.99"/>
<ellipse cx="306.1" cy="220.9" rx="149.1" ry="59.6" fill="#228c61"/>
<ellipse cx="306.1" cy="220.9" rx="149.1" ry="59.6" fill="url(#sh14)" fill-opacity="0.99"/>
<ellipse cx="306.1" cy="220.1" rx="149.0" ry="59.5" fill="#238d5f"/>
<ellipse cx="306.1" cy="220.1" rx="149.0" ry="59.5" fill="url(#sh14)" fill-opacity="0.99"/>
<ellipse cx="306.1" cy="219.2" rx="148.8" ry="59.3" fill="#238e5d"/>
<ellipse cx="306.1" cy="219.2" rx="148.8" ry="59.3" fill="url(#sh14)" fill-opacity="0.99"/>
<ellipse cx="306.1" cy="218.4" rx="148.7" ry="59.2" fill="#248f5b"/>
<ellipse cx="306.1" cy="218.4" rx="148.7" ry="59.2" fill="url(#sh14)" fill-opacity="0.99"/>
<ellipse cx="306.1" cy="217.5" rx="148.5" ry="59.0" fill="#249159"/>
<ellipse cx="306.1" cy="217.5" rx="148.5" ry="59.0" fill="url(#sh14)" fill-opacity="0.99"/>
<ellipse cx="306.1" cy="216.7" rx="148.4" ry="58.9" fill="#259257"/>
<ellipse cx="306.1" cy="216.7" rx="148.4" ry="58.9" fill="url(#sh14)" fill-opacity="0.99"/>
<ellipse cx="306.1" cy="215.8" rx="148.3" ry="58.7" fill="#259355"/>
<ellipse cx="306.1" cy="215.8" rx="148.3" ry="58.7" fill="url(#sh14)" fill-opacity="0.99"/>
<ellipse cx="306.1" cy="215.0" rx="148.1" ry="58.6" fill="#269453"/>
<ellipse cx="306.1" cy="215.0" rx="148.1" ry="58.6" fill="url(#sh13)" fill-opacity="0.99"/>
<ellipse cx="306.1" cy="214.1" rx="148.0" ry="58.4" fill="#279551"/>
<ellipse cx="306.1" cy="214.1" rx="148.0" ry="58.4" fill="url(#sh13)" fill-opacity="0.99"/>
<ellipse cx="306.1" cy="213.3" rx="147.8" ry="58.3" fill="#27964f"/>
<ellipse cx="306.1" cy="213.3" rx="147.8" ry="58.3" fill="url(#sh13)" fill-opacity="0.99"/>
<ellipse cx="306.1" cy="212.5" rx="147.7" ry="58.1" fill="#28974d"/>
<ellipse cx="306.1" cy="212.5" rx="147.7" ry="58.1" fill="url(#sh13)" fill-opacity="0.99"/>
<ellipse cx="306.1" cy="211.6" rx="147.5" ry="57.9" fill="#29984b"/>
<ellipse cx="306.1" cy="211.6" rx="147.5" ry="57.9" fill="url(#sh13)" fill-opacity="0.99"/>
<ellipse cx="306.1" cy="210.8" rx="147.4" ry="57.8" fill="#2a9949"/>
<ellipse cx="306.1" cy="210.8" rx="147.4" ry="57.8" fill="url(#sh13)" fill-opacity="0.99"/>
<ellipse cx="306.1" cy="209.9" rx="147.2" ry="57.6" fill="#2b9947"/>
<ellipse cx="306.1" cy="209.9" rx="147.2" ry="57.6" fill="url(#sh13)" fill-opacity="0.99"/>
<ellipse cx="306.1" cy="209.1" rx="147.1" ry="57.4" fill="#2c9a45"/>
<ellipse cx="306.1" cy="209.1" rx="147.1" ry="57.4" fill="url(#sh13)" fill-opacity="0.99"/>
<ellipse cx="306.1" cy="208.3" rx="146.9" ry="57.3" fill="#2d9b43"/>
<ellipse cx="306.1" cy="208.3" rx="146.9" ry="57.3" fill="url(#sh13)" fill-opacity="0.99"/>
<ellipse cx="306.1" cy="207.4" rx="146.7" ry="57.1" fill="#2f9b41"/>
<ellipse cx="306.1" cy="207.4" rx="146.7" ry="57.1" fill="url(#sh12)" fill-opacity="0.99"/>
<ellipse cx="306.0" cy="206.6" rx="146.6" ry="56.9" fill="#309c3f"/>
<ellipse cx="306.0" cy="206.6" rx="146.6" ry="56.9" fill="url(#sh12)" fill-opacity="0.99"/>
<ellipse cx="306.0" cy="205.8" rx="146.4" ry="56.8" fill="#319c3c"/>
<ellipse cx="306.0" cy="205.8" rx="146.4" ry="56.8" fill="url(#sh12)" fill-opacity="0.99"/>
<ellipse cx="306.0" cy="205.0" rx="146.3" ry="56.6" fill="#329d3a"/>
<ellipse cx="306.0" cy="205.0" rx="146.3" ry="56.6" fill="url(#sh12)" fill-opacity="0.99"/>
<ellipse cx="306.0" cy="204.1" rx="146.1" ry="56.4" fill="#339e38"/>
<ellipse cx="306.0" cy="204.1" rx="146.1" ry="56.4" fill="url(#sh12)" fill-opacity="0.99"/>
<ellipse cx="306.0" cy="203.3" rx="145.9" ry="56.2" fill="#349e36"/>
<ellipse cx="306.0" cy="203.3" rx="145.9" ry="56.2" fill="url(#sh12)" fill-opacity="0.99"/>
<ellipse cx="306.0" cy="202.5" rx="145.8" ry="56.1" fill="#369f34"/>
<ellipse cx="306.0" cy="202.5" rx="145.8" ry="56.1" fill="url(#sh12)" fill-opacity="0.99"/>
<ellipse cx="306.0" cy="201.7" rx="145.6" ry="55.9" fill="#379f32"/>
<ellipse cx="306.0" cy="201.7" rx="145.6" ry="55.9" fill="url(#sh12)" fill-opacity="0.99"/>
<ellipse cx="306.0" cy="200.9" rx="145.4" ry="55.7" fill="#38a030"/>
<ellipse cx="306.0" cy="200.9" rx="145.4" ry="55.7" fill="url(#sh12)" fill-opacity="0.99"/>
<ellipse cx="306.0" cy="200.0" rx="145.2" ry="55.5" fill="#3aa02f"/>
<ellipse cx="306.0" cy="200.0" rx="145.2" ry="55.5" fill="url(#sh12)" fill-opacity="0.99"/>
<ellipse cx="306.0" cy="199.2" rx="145.1" ry="55.3" fill="#3ba12f"/>
<ellipse cx="306.0" cy="199.2" rx="145.1" ry="55.3" fill="url(#sh11)" fill-opacity="0.99"/>
<ellipse cx="306.0" cy="198.4" rx="144.9" ry="55.1" fill="#3da12e"/>
<ellipse cx="306.0" cy="198.4" rx="144.9" ry="55.1" fill="url(#sh11)" fill-opacity="0.99"/>
<ellipse cx="306.0" cy="197.6" rx="144.7" ry="55.0" fill="#3fa12e"/>
<ellipse cx="306.0" cy="197.6" rx="144.7" ry="55.0" fill="url(#sh11)" fill-opacity="0.99"/>
<ellipse cx="306.0" cy="196.8" rx="144.5" ry="54.8" fill="#40a12d"/>
<ellipse cx="306.0" cy="196.8" rx="144.5" ry="54.8" fill="url(#sh11)" fill-opacity="0.99"/>
<ellipse cx="306.0" cy="196.0" rx="144.3" ry="54.6" fill="#42a22d"/>
<ellipse cx="306.0" cy="196.0" rx="144.3" ry="54.6" fill="url(#sh11)" fill-opacity="0.99"/>
<ellipse cx="306.0" cy="195.2" rx="144.1" ry="54.4" fill="#44a22c"/>
<ellipse cx="306.0" cy="195.2" rx="144.1" ry="54.4" fill="url(#sh11)" fill-opacity="0.99"/>
<ellipse cx="306.0" cy="194.4" rx="144.0" ry="54.2" fill="#46a22b"/>
<ellipse cx="306.0" cy="194.4" rx="144.0" ry="54.2" fill="url(#sh11)" fill-opacity="0.99"/>
<ellipse cx="306.0" cy="193.5" rx="143.8" ry="54.0" fill="#47a32b"/>
<ellipse cx="306.0" cy="193.5" rx="143.8" ry="54.0" fill="url(#sh11)" fill-opacity="0.98"/>
<ellipse cx="306.0" cy="192.7" rx="143.6" ry="53.8" fill="#49a32a"/>
<ellipse cx="306.0" cy="192.7" rx="143.6" ry="53.8" fill="url(#sh11)" fill-opacity="0.98"/>
<ellipse cx="306.0" cy="191.9" rx="143.4" ry="53.6" fill="#4ba32a"/>
<ellipse cx="306.0" cy="191.9" rx="143.4" ry="53.6" fill="url(#sh10)" fill-opacity="0.98"/>
<ellipse cx="306.0" cy="191.1" rx="143.2" ry="53.4" fill="#4ca329"/>
<ellipse cx="306.0" cy="191.1" rx="143.2" ry="53.4" fill="url(#sh10)" fill-opacity="0.98"/>
<ellipse cx="306.0" cy="190.3" rx="143.0" ry="53.2" fill="#4ea429"/>
<ellipse cx="306.0" cy="190.3" rx="143.0" ry="53.2" fill="url(#sh10)" fill-opacity="0.98"/>
<ellipse cx="306.0" cy="189.5" rx="142.8" ry="53.0" fill="#50a428"/>
<ellipse cx="306.0" cy="189.5" rx="142.8" ry="53.0" fill="url(#sh10)" fill-opacity="0.98"/>
<ellipse cx="306.0" cy="188.7" rx="142.6" ry="52.8" fill="#52a528"/>
<ellipse cx="306.0" cy="188.7" rx="142.6" ry="52.8" fill="url(#sh10)" fill-opacity="0.98"/>
<ellipse cx="306.0" cy="187.9" rx="142.4" ry="52.6" fill="#55a529"/>
<ellipse cx="306.0" cy="187.9" rx="142.4" ry="52.6" fill="url(#sh10)" fill-opacity="0.98"/>
<ellipse cx="306.0" cy="187.1" rx="142.2" ry="52.4" fill="#57a629"/>
<ellipse cx="306.0" cy="187.1" rx="142.2" ry="52.4" fill="url(#sh10)" fill-opacity="0.98"/>
<ellipse cx="306.0" cy="186.3" rx="142.0" ry="52.2" fill="#59a629"/>
<ellipse cx="306.0" cy="186.3" rx="142.0" ry="52.2" fill="url(#sh10)" fill-opacity="0.98"/>
<ellipse cx="306.0" cy="185.5" rx="141.7" ry="52.0" fill="#5ca729"/>
<ellipse cx="306.0" cy="185.5" rx="141.7" ry="52.0" fill="url(#sh10)" fill-opacity="0.98"/>
<ellipse cx="306.0" cy="184.7" rx="141.5" ry="51.8" fill="#5ea82a"/>
<ellipse cx="306.0" cy="184.7" rx="141.5" ry="51.8" fill="url(#sh10)" fill-opacity="0.98"/>
<ellipse cx="305.9" cy="184.0" rx="141.3" ry="51.6" fill="#60a82a"/>
<ellipse cx="305.9" cy="184.0" rx="141.3" ry="51.6" fill="url(#sh9)" fill-opacity="0.98"/>
<ellipse cx="305.9" cy="183.2" rx="141.1" ry="51.3" fill="#63a92a"/>
<ellipse cx="305.9" cy="183.2" rx="141.1" ry="51.3" fill="url(#sh9)" fill-opacity="0.98"/>
<ellipse cx="305.9" cy="182.4" rx="140.9" ry="51.1" fill="#65a92b"/>
<ellipse cx="305.9" cy="182.4" rx="140.9" ry="51.1" fill="url(#sh9)" fill-opacity="0.98"/>
<ellipse cx="305.9" cy="181.7" rx="140.7" ry="50.9" fill="#68aa2b"/>
<ellipse cx="305.9" cy="181.7" rx="140.7" ry="50.9" fill="url(#sh9)" fill-opacity="0.98"/>
<ellipse cx="305.9" cy="181.0" rx="140.5" ry="50.6" fill="#6aaa2b"/>
<ellipse cx="305.9" cy="181.0" rx="140.5" ry="50.6" fill="url(#sh9)" fill-opacity="0.98"/>
<ellipse cx="305.9" cy="180.2" rx="140.2" ry="50.3" fill="#6cab2c"/>
<ellipse cx="305.9" cy="180.2" rx="140.2" ry="50.3" fill="url(#sh9)" fill-opacity="0.98"/>
<ellipse cx="305.9" cy="179.5" rx="140.0" ry="50.0" fill="#6fac2c"/>
<ellipse cx="305.9" cy="179.5" rx="140.0" ry="50.0" fill="url(#sh9)" fill-opacity="0.98"/>
<ellipse cx="305.9" cy="178.8" rx="139.8" ry="49.7" fill="#71ac2c"/>
<ellipse cx="305.9" cy="178.8" rx="139.8" ry="49.7" fill="url(#sh9)" fill-opacity="0.98"/>
<ellipse cx="305.9" cy="178.1" rx="139.6" ry="49.5" fill="#73ac2d"/>
<ellipse cx="305.9" cy="178.1" rx="139.6" ry="49.5" fill="url(#sh9)" fill-opacity="0.98"/>
<ellipse cx="305.9" cy="177.4" rx="139.4" ry="49.2" fill="#75ad2d"/>
<ellipse cx="305.9" cy="177.4" rx="139.4" ry="49.2" fill="url(#sh8)" fill-opacity="0.98"/>
<ellipse cx="305.9" cy="176.7" rx="139.2" ry="48.8" fill="#77ad2d"/>
<ellipse cx="305.9" cy="176.7" rx="139.2" ry="48.8" fill="url(#sh8)" fill-opacity="0.98"/>
<ellipse cx="305.9" cy="176.0" rx="138.9" ry="48.5" fill="#79ad2e"/>
<ellipse cx="305.9" cy="176.0" rx="138.9" ry="48.5" fill="url(#sh8)" fill-opacity="0.97"/>
<ellipse cx="305.9" cy="175.3" rx="138.7" ry="48.2" fill="#7bae2e"/>
<ellipse cx="305.9" cy="175.3" rx="138.7" ry="48.2" fill="url(#sh8)" fill-opacity="0.97"/>
<ellipse cx="305.9" cy="174.7" rx="138.5" ry="47.9" fill="#7dae2f"/>
<ellipse cx="305.9" cy="174.7" rx="138.5" ry="47.9" fill="url(#sh8)" fill-opacity="0.97"/>
<ellipse cx="305.9" cy="174.0" rx="138.3" ry="47.6" fill="#7fae2f"/>
<ellipse cx="305.9" cy="174.0" rx="138.3" ry="47.6" fill="url(#sh8)" fill-opacity="0.97"/>
<ellipse cx="305.9" cy="173.3" rx="138.1" ry="47.2" fill="#81ae30"/>
<ellipse cx="305.9" cy="173.3" rx="138.1" ry="47.2" fill="url(#sh8)" fill-opacity="0.97"/>
<ellipse cx="305.9" cy="172.7" rx="137.8" ry="46.9" fill="#83af30"/>
<ellipse cx="305.9" cy="172.7" rx="137.8" ry="46.9" fill="url(#sh8)" fill-opacity="0.97"/>
<ellipse cx="305.9" cy="172.0" rx="137.6" ry="46.6" fill="#85af31"/>
<ellipse cx="305.9" cy="172.0" rx="137.6" ry="46.6" fill="url(#sh8)" fill-opacity="0.97"/>
<ellipse cx="305.9" cy="171.3" rx="137.4" ry="46.2" fill="#87af31"/>
<ellipse cx="305.9" cy="171.3" rx="137.4" ry="46.2" fill="url(#sh8)" fill-opacity="0.97"/>
<ellipse cx="305.9" cy="170.7" rx="137.2" ry="45.9" fill="#89b031"/>
<ellipse cx="305.9" cy="170.7" rx="137.2" ry="45.9" fill="url(#sh7)" fill-opacity="0.97"/>
<ellipse cx="305.9" cy="170.0" rx="136.9" ry="45.5" fill="#8bb032"/>
<ellipse cx="305.9" cy="170.0" rx="136.9" ry="45.5" fill="url(#sh7)" fill-opacity="0.97"/>
<ellipse cx="305.9" cy="169.4" rx="136.7" ry="45.2" fill="#8db032"/>
<ellipse cx="305.9" cy="169.4" rx="136.7" ry="45.2" fill="url(#sh7)" fill-opacity="0.97"/>
<ellipse cx="305.9" cy="168.7" rx="136.5" ry="44.8" fill="#8eb033"/>
<ellipse cx="305.9" cy="168.7" rx="136.5" ry="44.8" fill="url(#sh7)" fill-opacity="0.97"/>
<ellipse cx="305.9" cy="168.1" rx="136.2" ry="44.5" fill="#90b033"/>
<ellipse cx="305.9" cy="168.1" rx="136.2" ry="44.5" fill="url(#sh7)" fill-opacity="0.97"/>
<ellipse cx="305.9" cy="167.5" rx="136.0" ry="44.1" fill="#91b034"/>
<ellipse cx="305.9" cy="167.5" rx="136.0" ry="44.1" fill="url(#sh7)" fill-opacity="0.97"/>
<ellipse cx="305.9" cy="166.8" rx="135.7" ry="43.7" fill="#92b034"/>
<ellipse cx="305.9" cy="166.8" rx="135.7" ry="43.7" fill="url(#sh7)" fill-opacity="0.97"/>
<ellipse cx="305.9" cy="166.2" rx="135.5" ry="43.4" fill="#94b035"/>
<ellipse cx="305.9" cy="166.2" rx="135.5" ry="43.4" fill="url(#sh7)" fill-opacity="0.97"/>
<ellipse cx="305.9" cy="165.6" rx="135.3" ry="43.0" fill="#95b035"/>
<ellipse cx="305.9" cy="165.6" rx="135.3" ry="43.0" fill="url(#sh7)" fill-opacity="0.96"/>
<ellipse cx="305.9" cy="164.9" rx="135.0" ry="42.6" fill="#96b036"/>
<ellipse cx="305.9" cy="164.9" rx="135.0" ry="42.6" fill="url(#sh6)" fill-opacity="0.96"/>
<ellipse cx="305.9" cy="164.3" rx="134.8" ry="42.3" fill="#98b036"/>
<ellipse cx="305.9" cy="164.3" rx="134.8" ry="42.3" fill="url(#sh6)" fill-opacity="0.96"/>
<ellipse cx="305.9" cy="163.7" rx="134.5" ry="41.9" fill="#99b037"/>
<ellipse cx="305.9" cy="163.7" rx="134.5" ry="41.9" fill="url(#sh6)" fill-opacity="0.96"/>
<ellipse cx="305.9" cy="163.0" rx="134.3" ry="41.5" fill="#9bb037"/>
<ellipse cx="305.9" cy="163.0" rx="134.3" ry="41.5" fill="url(#sh6)" fill-opacity="0.96"/>
<ellipse cx="305.9" cy="162.4" rx="134.0" ry="41.2" fill="#9cb038"/>
<ellipse cx="305.9" cy="162.4" rx="134.0" ry="41.2" fill="url(#sh6)" fill-opacity="0.96"/>
<ellipse cx="305.9" cy="161.8" rx="133.7" ry="40.8" fill="#9daf38"/>
<ellipse cx="305.9" cy="161.8" rx="133.7" ry="40.8" fill="url(#sh6)" fill-opacity="0.96"/>
<ellipse cx="305.8" cy="161.1" rx="133.5" ry="40.4" fill="#9eaf38"/>
<ellipse cx="305.8" cy="161.1" rx="133.5" ry="40.4" fill="url(#sh6)" fill-opacity="0.96"/>
<ellipse cx="305.8" cy="160.5" rx="133.2" ry="40.0" fill="#9eae38"/>
<ellipse cx="305.8" cy="160.5" rx="133.2" ry="40.0" fill="url(#sh6)" fill-opacity="0.96"/>
<ellipse cx="305.8" cy="159.9" rx="132.9" ry="39.7" fill="#9fae38"/>
<ellipse cx="305.8" cy="159.9" rx="132.9" ry="39.7" fill="url(#sh6)" fill-opacity="0.96"/>
<ellipse cx="305.8" cy="159.3" rx="132.7" ry="39.3" fill="#a0ad38"/>
<ellipse cx="305.8" cy="159.3" rx="132.7" ry="39.3" fill="url(#sh6)" fill-opacity="0.96"/>
<ellipse cx="305.8" cy="158.6" rx="132.4" ry="38.9" fill="#a1ad38"/>
<ellipse cx="305.8" cy="158.6" rx="132.4" ry="38.9" fill="url(#sh5)" fill-opacity="0.95"/>
<ellipse cx="305.8" cy="158.0" rx="132.1" ry="38.5" fill="#a2ac38"/>
<ellipse cx="305.8" cy="158.0" rx="132.1" ry="38.5" fill="url(#sh5)" fill-opacity="0.95"/>
<ellipse cx="305.8" cy="157.4" rx="131.8" ry="38.2" fill="#a2ac38"/>
<ellipse cx="305.8" cy="157.4" rx="131.8" ry="38.2" fill="url(#sh5)" fill-opacity="0.95"/>
<ellipse cx="305.8" cy="156.8" rx="131.5" ry="37.8" fill="#a3ab38"/>
<ellipse cx="305.8" cy="156.8" rx="131.5" ry="37.8" fill="url(#sh5)" fill-opacity="0.95"/>
<ellipse cx="305.8" cy="156.1" rx="131.2" ry="37.4" fill="#a4ab38"/>
<ellipse cx="305.8" cy="156.1" rx="131.2" ry="37.4" fill="url(#sh5)" fill-opacity="0.95"/>
<ellipse cx="305.8" cy="155.5" rx="130.9" ry="37.1" fill="#a5aa38"/>
<ellipse cx="305.8" cy="155.5" rx="130.9" ry="37.1" fill="url(#sh5)" fill-opacity="0.95"/>
<ellipse cx="305.8" cy="154.9" rx="130.6" ry="36.7" fill="#a6aa38"/>
<ellipse cx="305.8" cy="154.9" rx="130.6" ry="36.7" fill="url(#sh5)" fill-opacity="0.95"/>
<ellipse cx="305.8" cy="154.2" rx="130.3" ry="36.3" fill="#a6a938"/>
<ellipse cx="305.8" cy="154.2" rx="130.3" ry="36.3" fill="url(#sh5)" fill-opacity="0.95"/>
<ellipse cx="305.8" cy="153.6" rx="130.0" ry="35.9" fill="#a7a938"/>
<ellipse cx="305.8" cy="153.6" rx="130.0" ry="35.9" fill="url(#sh5)" fill-opacity="0.94"/>
<ellipse cx="305.8" cy="153.0" rx="129.7" ry="35.6" fill="#a8a838"/>
<ellipse cx="305.8" cy="153.0" rx="129.7" ry="35.6" fill="url(#sh4)" fill-opacity="0.94"/>
<ellipse cx="305.8" cy="152.4" rx="129.4" ry="35.1" fill="#a9a738"/>
<ellipse cx="305.8" cy="152.4" rx="129.4" ry="35.1" fill="url(#sh4)" fill-opacity="0.94"/>
<ellipse cx="305.8" cy="151.8" rx="129.1" ry="34.7" fill="#aaa537"/>
<ellipse cx="305.8" cy="151.8" rx="129.1" ry="34.7" fill="url(#sh4)" fill-opacity="0.94"/>
<ellipse cx="305.8" cy="151.3" rx="128.8" ry="34.3" fill="#aaa437"/>
<ellipse cx="305.8" cy="151.3" rx="128.8" ry="34.3" fill="url(#sh4)" fill-opacity="0.94"/>
<ellipse cx="305.8" cy="150.7" rx="128.5" ry="33.9" fill="#aba336"/>
<ellipse cx="305.8" cy="150.7" rx="128.5" ry="33.9" fill="url(#sh4)" fill-opacity="0.94"/>
<ellipse cx="305.8" cy="150.1" rx="128.2" ry="33.4" fill="#aca136"/>
<ellipse cx="305.8" cy="150.1" rx="128.2" ry="33.4" fill="url(#sh4)" fill-opacity="0.94"/>
<ellipse cx="305.8" cy="149.6" rx="127.9" ry="33.0" fill="#ada036"/>
<ellipse cx="305.8" cy="149.6" rx="127.9" ry="33.0" fill="url(#sh4)" fill-opacity="0.93"/>
<ellipse cx="305.8" cy="149.0" rx="127.6" ry="32.5" fill="#ad9f35"/>
<ellipse cx="305.8" cy="149.0" rx="127.6" ry="32.5" fill="url(#sh4)" fill-opacity="0.93"/>
<ellipse cx="305.8" cy="148.5" rx="127.3" ry="32.1" fill="#ae9d35"/>
<ellipse cx="305.8" cy="148.5" rx="127.3" ry="32.1" fill="url(#sh4)" fill-opacity="0.93"/>
<ellipse cx="305.8" cy="148.0" rx="127.0" ry="31.6" fill="#af9c35"/>
<ellipse cx="305.8" cy="148.0" rx="127.0" ry="31.6" fill="url(#sh4)" fill-opacity="0.93"/>
<ellipse cx="305.8" cy="147.4" rx="126.7" ry="31.1" fill="#b09a34"/>
<ellipse cx="305.8" cy="147.4" rx="126.7" ry="31.1" fill="url(#sh3)" fill-opacity="0.93"/>
<ellipse cx="305.8" cy="146.9" rx="126.4" ry="30.7" fill="#b09834"/>
<ellipse cx="305.8" cy="146.9" rx="126.4" ry="30.7" fill="url(#sh3)" fill-opacity="0.93"/>
<ellipse cx="305.8" cy="146.3" rx="126.0" ry="30.2" fill="#b09533"/>
<ellipse cx="305.8" cy="146.3" rx="126.0" ry="30.2" fill="url(#sh3)" fill-opacity="0.92"/>
<ellipse cx="305.8" cy="145.8" rx="125.7" ry="29.8" fill="#b09233"/>
<ellipse cx="305.8" cy="145.8" rx="125.7" ry="29.8" fill="url(#sh3)" fill-opacity="0.92"/>
<ellipse cx="305.8" cy="145.2" rx="125.4" ry="29.3" fill="#b08f32"/>
<ellipse cx="305.8" cy="145.2" rx="125.4" ry="29.3" fill="url(#sh3)" fill-opacity="0.92"/>
<ellipse cx="305.8" cy="144.7" rx="125.1" ry="28.9" fill="#b08c32"/>
<ellipse cx="305.8" cy="144.7" rx="125.1" ry="28.9" fill="url(#sh3)" fill-opacity="0.92"/>
<ellipse cx="305.8" cy="144.1" rx="124.7" ry="28.4" fill="#b08931"/>
<ellipse cx="305.8" cy="144.1" rx="124.7" ry="28.4" fill="url(#sh3)" fill-opacity="0.92"/>
<ellipse cx="305.8" cy="143.6" rx="124.4" ry="28.0" fill="#b08631"/>
<ellipse cx="305.8" cy="143.6" rx="124.4" ry="28.0" fill="url(#sh3)" fill-opacity="0.91"/>
<ellipse cx="305.8" cy="143.0" rx="124.0" ry="27.5" fill="#b08330"/>
<ellipse cx="305.8" cy="143.0" rx="124.0" ry="27.5" fill="url(#sh3)" fill-opacity="0.91"/>
<ellipse cx="305.8" cy="142.5" rx="123.6" ry="27.1" fill="#b08030"/>
<ellipse cx="305.8" cy="142.5" rx="123.6" ry="27.1" fill="url(#sh2)" fill-opacity="0.91"/>
<ellipse cx="305.8" cy="141.9" rx="123.2" ry="26.7" fill="#af7c30"/>
<ellipse cx="305.8" cy="141.9" rx="123.2" ry="26.7" fill="url(#sh2)" fill-opacity="0.91"/>
<ellipse cx="305.8" cy="141.3" rx="122.8" ry="26.3" fill="#ae7830"/>
<ellipse cx="305.8" cy="141.3" rx="122.8" ry="26.3" fill="url(#sh2)" fill-opacity="0.90"/>
<ellipse cx="305.8" cy="140.7" rx="122.4" ry="25.9" fill="#ad7430"/>
<ellipse cx="305.8" cy="140.7" rx="122.4" ry="25.9" fill="url(#sh2)" fill-opacity="0.90"/>
<ellipse cx="305.8" cy="140.0" rx="122.0" ry="25.5" fill="#ac7030"/>
<ellipse cx="305.8" cy="140.0" rx="122.0" ry="25.5" fill="url(#sh2)" fill-opacity="0.90"/>
<ellipse cx="305.8" cy="139.4" rx="121.5" ry="25.1" fill="#ab6c30"/>
<ellipse cx="305.8" cy="139.4" rx="121.5" ry="25.1" fill="url(#sh2)" fill-opacity="0.89"/>
<ellipse cx="305.7" cy="138.7" rx="121.1" ry="24.8" fill="#aa6830"/>
<ellipse cx="305.7" cy="138.7" rx="121.1" ry="24.8" fill="url(#sh2)" fill-opacity="0.89"/>
<ellipse cx="305.7" cy="138.1" rx="120.5" ry="24.5" fill="#a96430"/>
<ellipse cx="305.7" cy="138.1" rx="120.5" ry="24.5" fill="url(#sh2)" fill-opacity="0.89"/>
<ellipse cx="305.7" cy="137.3" rx="120.0" ry="24.2" fill="#a86030"/>
<ellipse cx="305.7" cy="137.3" rx="120.0" ry="24.2" fill="url(#sh2)" fill-opacity="0.88"/>
<ellipse cx="305.7" cy="136.6" rx="119.4" ry="24.0" fill="#a75c30"/>
<ellipse cx="305.7" cy="136.6" rx="119.4" ry="24.0" fill="url(#sh2)" fill-opacity="0.88"/>
<ellipse cx="305.7" cy="135.8" rx="118.8" ry="23.8" fill="#a65730"/>
<ellipse cx="305.7" cy="135.8" rx="118.8" ry="23.8" fill="url(#sh1)" fill-opacity="0.87"/>
<ellipse cx="305.7" cy="134.9" rx="118.1" ry="23.7" fill="#a55330"/>
<ellipse cx="305.7" cy="134.9" rx="118.1" ry="23.7" fill="url(#sh1)" fill-opacity="0.86"/>
<ellipse cx="305.7" cy="134.0" rx="117.4" ry="23.5" fill="#a44f30"/>
<ellipse cx="305.7" cy="134.0" rx="117.4" ry="23.5" fill="url(#sh1)" fill-opacity="0.86"/>
<ellipse cx="305.7" cy="133.2" rx="116.6" ry="23.4" fill="#a34a30"/>
<ellipse cx="305.7" cy="133.2" rx="116.6" ry="23.4" fill="url(#sh1)" fill-opacity="0.85"/>
<ellipse cx="305.7" cy="132.3" rx="115.9" ry="23.2" fill="#a24630"/>
<ellipse cx="305.7" cy="132.3" rx="115.9" ry="23.2" fill="url(#sh1)" fill-opacity="0.84"/>
<ellipse cx="305.7" cy="131.5" rx="115.1" ry="23.1" fill="#a24130"/>
<ellipse cx="305.7" cy="131.5" rx="115.1" ry="23.1" fill="url(#dk)" fill-opacity="0.06"/>
<ellipse cx="305.7" cy="131.5" rx="115.1" ry="23.1" fill="url(#sh1)" fill-opacity="0.84"/>
<ellipse cx="305.7" cy="130.6" rx="114.3" ry="22.9" fill="#a13d30"/>
<ellipse cx="305.7" cy="130.6" rx="114.3" ry="22.9" fill="url(#dk)" fill-opacity="0.12"/>
<ellipse cx="305.7" cy="130.6" rx="114.3" ry="22.9" fill="url(#sh1)" fill-opacity="0.83"/>
<ellipse cx="305.7" cy="129.8" rx="113.5" ry="22.8" fill="#a0382f"/>
<ellipse cx="305.7" cy="129.8" rx="113.5" ry="22.8" fill="url(#dk)" fill-opacity="0.18"/>
<ellipse cx="305.7" cy="129.8" rx="113.5" ry="22.8" fill="url(#sh1)" fill-opacity="0.82"/>
<ellipse cx="305.7" cy="128.9" rx="112.7" ry="22.6" fill="#9e342d"/>
<ellipse cx="305.7" cy="128.9" rx="112.7" ry="22.6" fill="url(#dk)" fill-opacity="0.24"/>
<ellipse cx="305.7" cy="128.9" rx="112.7" ry="22.6" fill="url(#sh1)" fill-opacity="0.81"/>
<ellipse cx="305.7" cy="128.1" rx="111.8" ry="22.5" fill="#9d302c"/>
<ellipse cx="305.7" cy="128.1" rx="111.8" ry="22.5" fill="url(#dk)" fill-opacity="0.30"/>
<ellipse cx="305.7" cy="128.1" rx="111.8" ry="22.5" fill="url(#sh0)" fill-opacity="0.80"/>
<ellipse cx="305.7" cy="127.3" rx="110.9" ry="22.3" fill="#9c2b2a"/>
<ellipse cx="305.7" cy="127.3" rx="110.9" ry="22.3" fill="url(#dk)" fill-opacity="0.36"/>
<ellipse cx="305.7" cy="127.3" rx="110.9" ry="22.3" fill="url(#sh0)" fill-opacity="0.79"/>
<ellipse cx="305.7" cy="126.4" rx="110.0" ry="22.1" fill="#9b2728"/>
<ellipse cx="305.7" cy="126.4" rx="110.0" ry="22.1" fill="url(#dk)" fill-opacity="0.42"/>
<ellipse cx="305.7" cy="126.4" rx="110.0" ry="22.1" fill="url(#sh0)" fill-opacity="0.78"/>
<ellipse cx="305.7" cy="125.6" rx="109.1" ry="21.9" fill="#992326"/>
<ellipse cx="305.7" cy="125.6" rx="109.1" ry="21.9" fill="url(#dk)" fill-opacity="0.47"/>
<ellipse cx="305.7" cy="125.6" rx="109.1" ry="21.9" fill="url(#sh0)" fill-opacity="0.77"/>
<ellipse cx="305.7" cy="124.8" rx="108.1" ry="21.8" fill="#981e24"/>
<ellipse cx="305.7" cy="124.8" rx="108.1" ry="21.8" fill="url(#dk)" fill-opacity="0.53"/>
<ellipse cx="305.7" cy="124.8" rx="108.1" ry="21.8" fill="url(#sh0)" fill-opacity="0.75"/>
<ellipse cx="305.7" cy="124.0" rx="107.1" ry="21.6" fill="#961d23"/>
<ellipse cx="305.7" cy="124.0" rx="107.1" ry="21.6" fill="url(#dk)" fill-opacity="0.59"/>
<ellipse cx="305.7" cy="124.0" rx="107.1" ry="21.6" fill="url(#sh0)" fill-opacity="0.74"/>
<ellipse cx="305.7" cy="123.2" rx="106.1" ry="21.4" fill="#951c21"/>
<ellipse cx="305.7" cy="123.2" rx="106.1" ry="21.4" fill="url(#dk)" fill-opacity="0.65"/>
<ellipse cx="305.7" cy="123.2" rx="106.1" ry="21.4" fill="url(#sh0)" fill-opacity="0.72"/>
<ellipse cx="305.7" cy="122.4" rx="105.0" ry="21.2" fill="#931a20"/>
<ellipse cx="305.7" cy="122.4" rx="105.0" ry="21.2" fill="url(#dk)" fill-opacity="0.70"/>
<ellipse cx="305.7" cy="122.4" rx="105.0" ry="21.2" fill="url(#sh0)" fill-opacity="0.71"/>
<ellipse cx="305.7" cy="121.6" rx="103.9" ry="21.0" fill="#91191e"/>
<ellipse cx="305.7" cy="121.6" rx="103.9" ry="21.0" fill="url(#dk)" fill-opacity="0.76"/>
<ellipse cx="305.7" cy="121.6" rx="103.9" ry="21.0" fill="url(#sh0)" fill-opacity="0.69"/>
<ellipse cx="305.7" cy="120.8" rx="102.7" ry="20.8" fill="#90181d"/>
<ellipse cx="305.7" cy="120.8" rx="102.7" ry="20.8" fill="url(#dk)" fill-opacity="0.82"/>
<ellipse cx="305.7" cy="120.8" rx="102.7" ry="20.8" fill="url(#sh0)" fill-opacity="0.67"/>
<ellipse cx="305.7" cy="119.9" rx="101.4" ry="20.6" fill="#8e171c"/>
<ellipse cx="305.7" cy="119.9" rx="101.4" ry="20.6" fill="url(#dk)" fill-opacity="0.88"/>
<ellipse cx="305.7" cy="119.9" rx="101.4" ry="20.6" fill="url(#sh0)" fill-opacity="0.65"/>
<ellipse cx="305.7" cy="119.1" rx="100.0" ry="20.5" fill="#8c161a"/>
<ellipse cx="305.7" cy="119.1" rx="100.0" ry="20.5" fill="url(#dk)" fill-opacity="0.94"/>
<ellipse cx="305.7" cy="119.1" rx="100.0" ry="20.5" fill="url(#sh0)" fill-opacity="0.63"/>
<ellipse cx="305.7" cy="118.3" rx="98.6" ry="20.3" fill="#8b1519"/>
<ellipse cx="305.7" cy="118.3" rx="98.6" ry="20.3" fill="url(#dk)" fill-opacity="1.00"/>
<ellipse cx="305.7" cy="118.3" rx="98.6" ry="20.3" fill="url(#sh0)" fill-opacity="0.61"/>
<ellipse cx="305.7" cy="117.4" rx="97.1" ry="20.1" fill="#891317"/>
<ellipse cx="305.7" cy="117.4" rx="97.1" ry="20.1" fill="url(#dk)" fill-opacity="1.00"/>
<ellipse cx="305.7" cy="117.4" rx="97.1" ry="20.1" fill="url(#sh0)" fill-opacity="0.58"/>
<ellipse cx="305.7" cy="116.6" rx="95.5" ry="19.9" fill="#871316"/>
<ellipse cx="305.7" cy="116.6" rx="95.5" ry="19.9" fill="url(#dk)" fill-opacity="1.00"/>
<ellipse cx="305.7" cy="116.6" rx="95.5" ry="19.9" fill="url(#sh0)" fill-opacity="0.56"/>
<ellipse cx="305.6" cy="115.8" rx="93.8" ry="19.8" fill="#861215"/>
<ellipse cx="305.6" cy="115.8" rx="93.8" ry="19.8" fill="url(#dk)" fill-opacity="1.00"/>
<ellipse cx="305.6" cy="115.8" rx="93.8" ry="19.8" fill="url(#sh0)" fill-opacity="0.53"/>
<ellipse cx="305.6" cy="115.0" rx="92.1" ry="19.6" fill="#841113"/>
<ellipse cx="305.6" cy="115.0" rx="92.1" ry="19.6" fill="url(#dk)" fill-opacity="1.00"/>
<ellipse cx="305.6" cy="115.0" rx="92.1" ry="19.6" fill="url(#sh0)" fill-opacity="0.50"/>
<ellipse cx="305.6" cy="114.2" rx="90.2" ry="19.3" fill="#821012"/>
<ellipse cx="305.6" cy="114.2" rx="90.2" ry="19.3" fill="url(#dk)" fill-opacity="1.00"/>
<ellipse cx="305.6" cy="114.2" rx="90.2" ry="19.3" fill="url(#sh0)" fill-opacity="0.47"/>
<ellipse cx="305.6" cy="113.5" rx="88.2" ry="19.1" fill="#810f11"/>
<ellipse cx="305.6" cy="113.5" rx="88.2" ry="19.1" fill="url(#dk)" fill-opacity="1.00"/>
<ellipse cx="305.6" cy="113.5" rx="88.2" ry="19.1" fill="url(#sh0)" fill-opacity="0.44"/>
<ellipse cx="305.6" cy="112.7" rx="86.1" ry="18.8" fill="#7f0e0f"/>
<ellipse cx="305.6" cy="112.7" rx="86.1" ry="18.8" fill="url(#dk)" fill-opacity="1.00"/>
<ellipse cx="305.6" cy="112.7" rx="86.1" ry="18.8" fill="url(#sh0)" fill-opacity="0.40"/>
<ellipse cx="305.6" cy="112.0" rx="83.9" ry="18.5" fill="#7d0d0e"/>
<ellipse cx="305.6" cy="112.0" rx="83.9" ry="18.5" fill="url(#dk)" fill-opacity="1.00"/>
<ellipse cx="305.6" cy="112.0" rx="83.9" ry="18.5" fill="url(#sh0)" fill-opacity="0.37"/>
<ellipse cx="305.6" cy="111.4" rx="81.5" ry="18.2" fill="#7b0c0d"/>
<ellipse cx="305.6" cy="111.4" rx="81.5" ry="18.2" fill="url(#dk)" fill-opacity="1.00"/>
<ellipse cx="305.6" cy="111.4" rx="81.5" ry="18.2" fill="url(#sh0)" fill-opacity="0.33"/>
<ellipse cx="305.6" cy="110.8" rx="79.1" ry="17.8" fill="#7a0b0b"/>
<ellipse cx="305.6" cy="110.8" rx="79.1" ry="17.8" fill="url(#dk)" fill-opacity="1.00"/>
<ellipse cx="305.6" cy="110.8" rx="79.1" ry="17.8" fill="url(#sh0)" fill-opacity="0.30"/>
<ellipse cx="305.6" cy="110.2" rx="76.4" ry="17.4" fill="#780a0a"/>
<ellipse cx="305.6" cy="110.2" rx="76.4" ry="17.4" fill="url(#dk)" fill-opacity="1.00"/>
<ellipse cx="305.6" cy="110.2" rx="76.4" ry="17.4" fill="url(#sh0)" fill-opacity="0.26"/>
<ellipse cx="305.6" cy="109.7" rx="73.7" ry="16.9" fill="#770a0a"/>
<ellipse cx="305.6" cy="109.7" rx="73.7" ry="16.9" fill="url(#dk)" fill-opacity="1.00"/>
<ellipse cx="305.6" cy="109.7" rx="73.7" ry="16.9" fill="url(#sh0)" fill-opacity="0.23"/>
<ellipse cx="305.6" cy="109.2" rx="70.7" ry="16.3" fill="#760a0a"/>
<ellipse cx="305.6" cy="109.2" rx="70.7" ry="16.3" fill="url(#dk)" fill-opacity="1.00"/>
<ellipse cx="305.6" cy="109.2" rx="70.7" ry="16.3" fill="url(#sh0)" fill-opacity="0.19"/>
<ellipse cx="305.6" cy="108.8" rx="67.6" ry="15.8" fill="#760909"/>
<ellipse cx="305.6" cy="108.8" rx="67.6" ry="15.8" fill="url(#dk)" fill-opacity="1.00"/>
<ellipse cx="305.6" cy="108.8" rx="67.6" ry="15.8" fill="url(#sh0)" fill-opacity="0.16"/>
<ellipse cx="305.6" cy="108.4" rx="64.3" ry="15.1" fill="#750909"/>
<ellipse cx="305.6" cy="108.4" rx="64.3" ry="15.1" fill="url(#dk)" fill-opacity="1.00"/>
<ellipse cx="305.6" cy="108.4" rx="64.3" ry="15.1" fill="url(#sh0)" fill-opacity="0.13"/>
<ellipse cx="305.6" cy="108.1" rx="60.9" ry="14.4" fill="#740909"/>
<ellipse cx="305.6" cy="108.1" rx="60.9" ry="14.4" fill="url(#dk)" fill-opacity="1.00"/>
<ellipse cx="305.6" cy="108.1" rx="60.9" ry="14.4" fill="url(#sh0)" fill-opacity="0.11"/>
<ellipse cx="305.6" cy="107.9" rx="57.2" ry="13.7" fill="#730909"/>
<ellipse cx="305.6" cy="107.9" rx="57.2" ry="13.7" fill="url(#dk)" fill-opacity="1.00"/>
<ellipse cx="305.6" cy="107.9" rx="57.2" ry="13.7" fill="url(#sh0)" fill-opacity="0.08"/>
<ellipse cx="305.6" cy="107.7" rx="53.4" ry="12.8" fill="#720808"/>
<ellipse cx="305.6" cy="107.7" rx="53.4" ry="12.8" fill="url(#dk)" fill-opacity="1.00"/>
<ellipse cx="305.6" cy="107.7" rx="53.4" ry="12.8" fill="url(#sh0)" fill-opacity="0.06"/>
<ellipse cx="305.6" cy="107.6" rx="49.4" ry="12.0" fill="#710808"/>
<ellipse cx="305.6" cy="107.6" rx="49.4" ry="12.0" fill="url(#dk)" fill-opacity="1.00"/>
<ellipse cx="305.6" cy="107.5" rx="45.2" ry="11.1" fill="#710808"/>
<ellipse cx="305.6" cy="107.5" rx="45.2" ry="11.1" fill="url(#dk)" fill-opacity="1.00"/>
<ellipse cx="305.6" cy="107.4" rx="41.0" ry="10.2" fill="#700808"/>
<ellipse cx="305.6" cy="107.4" rx="41.0" ry="10.2" fill="url(#dk)" fill-opacity="1.00"/>
</g>
</g></g>
<!-- colour bar -->
<rect x="586" y="128.7" width="27.5" height="217.7" fill="url(#cb)"/>
<rect x="586.25" y="128.95" width="27" height="217.2" fill="none" stroke="#000" stroke-opacity="0.35" stroke-width="0.5"/>
<g font-family="'DejaVu Sans Mono','Liberation Mono',monospace" fill="#111" stroke="#111" stroke-width="0.3">
<text x="586" y="99.2" font-size="13.8" textLength="93.5" lengthAdjust="spacing">Surface Sag</text>
<g font-size="13.6">
<text x="616" y="134.2">0</text>
<text x="616" y="156" textLength="58.4">-0.0176</text>
<text x="616" y="177.7" textLength="50">-0.035</text>
<text x="616" y="199.5" textLength="58.4">-0.0527</text>
<text x="616" y="221.2" textLength="58.4">-0.0703</text>
<text x="616" y="243" textLength="50">-0.088</text>
<text x="616" y="264.7" textLength="58.4">-0.1055</text>
<text x="616" y="286.5" textLength="50">-0.123</text>
<text x="616" y="308.2" textLength="58.4">-0.1406</text>
<text x="616" y="330" textLength="58.4">-0.1582</text>
<text x="616" y="351.7" textLength="58.4">-0.1758</text>
<text x="32.6" y="120" font-size="14.6">0</text>
<text x="21.4" y="221.5" textLength="41.6">-0.10</text>
<text x="121.6" y="320" textLength="33.6">-0.5</text>
<text x="217.3" y="343.8">0</text>
<text x="309.4" y="371" textLength="26.2">0.5</text>
<text x="460.6" y="293.3" font-size="13.4">0</text>
</g>
<text x="615.4" y="376.4" font-size="11.9" textLength="79.5">Millimeters</text>
<text transform="translate(164,357.5) rotate(15.3)" font-size="15.9" textLength="125.4">X-Millimeters</text>
<text transform="translate(474.7,348.8) rotate(-59)" font-size="15.9" textLength="124.6">Y-Millimeters</text>
</g>
<!-- bottom panel -->
<g stroke="#6a6a6a" stroke-width="1.35" fill="none">
<path d="M0,449 L698,449"/>
<path d="M0,466 L698,466"/>
<path d="M1.5,449 L1.5,553"/>
<path d="M466,466 L466,553"/>
<path d="M466,518 L698,518"/>
</g>
<g font-family="'DejaVu Sans Mono','Liberation Mono',monospace" fill="#111" font-size="10.4" stroke="#111" stroke-width="0.22">
<text x="305" y="460" textLength="93">Surface Sag Map</text>
<text x="11.8" y="491.8" textLength="56.4">10-Jan-25</text>
<text x="12.4" y="505.3" textLength="62">Surface 6.</text>
<text x="12.4" y="518.8" textLength="136.5">Units are Millimeters.</text>
<text x="11.4" y="532.3" textLength="239">Peak to Valley = 0.1758, RMS = 0.06966</text>
<text x="12.4" y="545.8" textLength="295.5">Width = 1.6, Decenter x = 0, y = 0 Millimeters.</text>
<text x="561" y="478" textLength="31">Zemax</text>
<text x="471" y="491.5" textLength="210">Ansys Zemax OpticStudio 2024 R2.02</text>
<text x="471" y="527.5" font-size="8.9" textLength="209">710_reoptimized_MTF_materials_QType.zmx</text>
<text x="522" y="540" font-size="8.9" textLength="107">Configuration 1 of 1</text>
</g>
<!-- bottom tab bar -->
<rect x="0" y="552.6" width="955" height="15.4" fill="url(#tbg)"/>
<path d="M0,553.4 C4,553.6 5.2,556 6.4,559 C7.6,562.5 8.4,566 9.6,568 L47.4,568 L47.4,553.4 Z" fill="#f3f3f7"/>
<path d="M0,553.8 C4,554 5.2,556.4 6.4,559.4 C7.6,562.9 8.4,566 9.6,568" fill="none" stroke="#8e909c" stroke-width="0.9"/>
<rect x="47.4" y="554.6" width="39.2" height="13.4" fill="url(#ttab)"/>
<path d="M47.4,554.6 V568 M86.6,554.6 V568" stroke="#9a9caa" stroke-width="0.9" fill="none"/>
<g font-family="'Liberation Sans',sans-serif" font-size="7.7" fill="#4a4a52">
<text x="17.6" y="563.9" textLength="20">Graph</text>
<text x="60.8" y="563.9" textLength="12.4">Text</text>
</g>

</svg>
</body></html>
